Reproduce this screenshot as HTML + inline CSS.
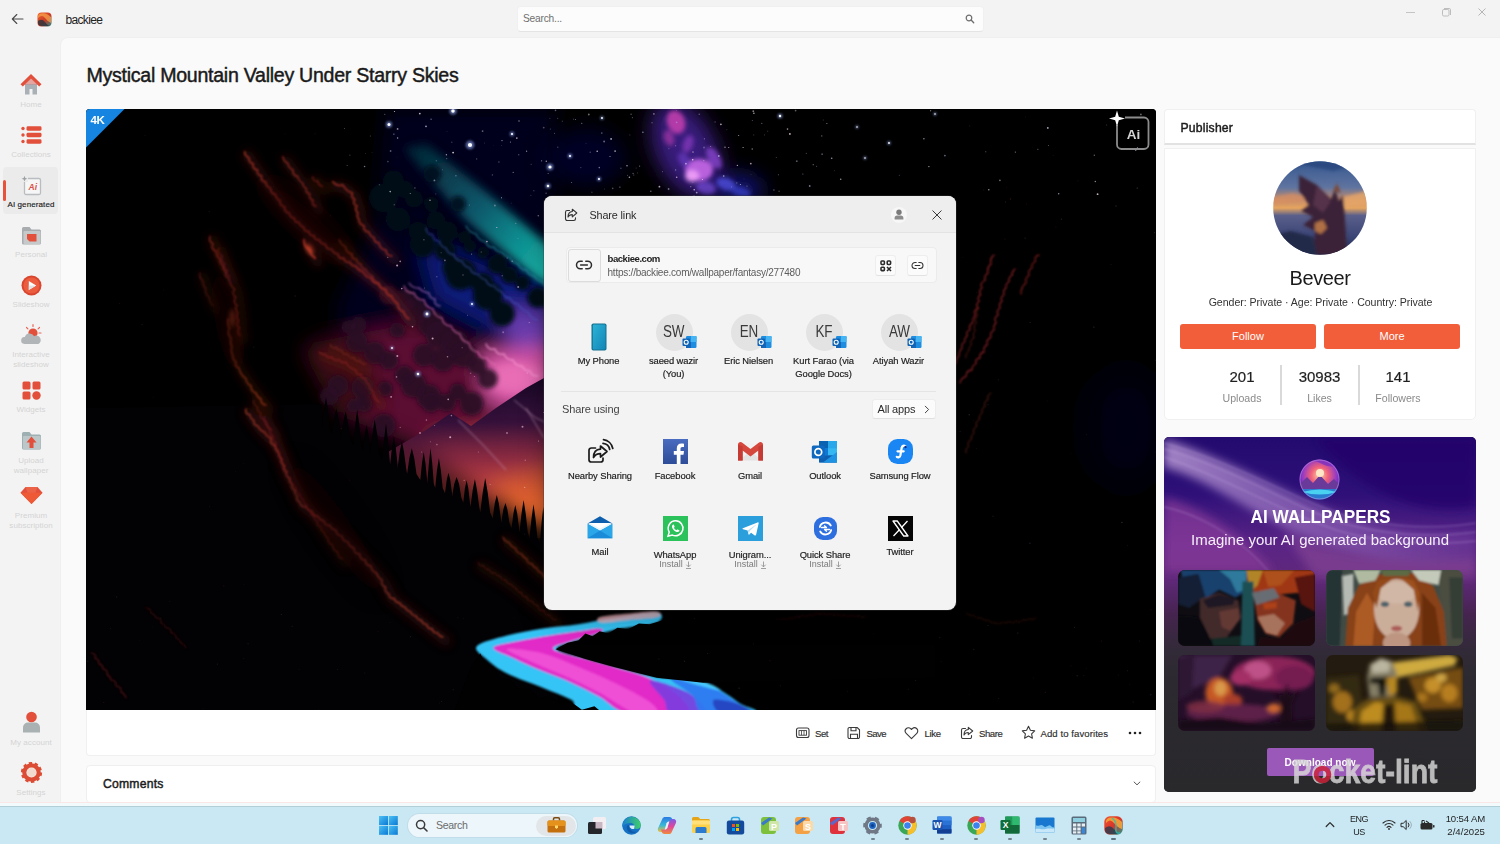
<!DOCTYPE html>
<html lang="en">
<head>
<meta charset="utf-8">
<title>backiee - Mystical Mountain Valley Under Starry Skies</title>
<style>
*{box-sizing:border-box;margin:0;padding:0}
html,body{width:1500px;height:844px;overflow:hidden;background:#f3f3f3}
body{font-family:"Liberation Sans","DejaVu Sans",sans-serif;color:#1b1b1b;position:relative;-webkit-font-smoothing:antialiased}
.abs{position:absolute}
.t{position:absolute;white-space:nowrap;line-height:1}
.c{text-align:center;transform:translateX(-50%)}
#titlebar{left:0;top:0;width:1500px;height:38px;background:#f3f3f3}
#sidebar{left:0;top:38px;width:61px;height:768px;background:#f3f3f3}
#content{left:61px;top:38px;width:1439px;height:768px;background:#fafafa;border-top-left-radius:7px;box-shadow:0 0 0 1px #efefef}
#search{left:517px;top:6px;width:467px;height:26px;background:#fcfcfc;border-radius:4px;border:1px solid #f0f0f0;border-bottom-color:#e4e4e4}
.sblabel{font-size:8px;color:#d4d4d4;left:31px;letter-spacing:.05px;margin-top:1px}
#pagetitle{left:86.5px;top:65.5px;font-size:19.6px;color:#1a1a1a;-webkit-text-stroke:.45px #1a1a1a;letter-spacing:-.28px}
#hero{left:86px;top:109px;width:1070px;height:601px;background:#000;overflow:hidden;border-radius:4px 4px 0 0}
#actions{left:86px;top:710px;width:1070px;height:46px;background:#fff;border:1px solid #f0f0f0;border-top:none;border-radius:0 0 4px 4px}
#comments{left:86px;top:765px;width:1070px;height:38px;background:#fff;border:1px solid #efefef;border-radius:4px}
.act{font-size:9.6px;color:#2e2e2e;top:728.5px;-webkit-text-stroke:.15px #2e2e2e}
#pubhead{left:1164px;top:109px;width:312px;height:36px;background:#fff;border:1px solid #f0f0f0;border-bottom:2px solid #e2e2e2;border-radius:4px 4px 0 0}
#pubbody{left:1164px;top:148px;width:312px;height:272px;background:#fff;border:1px solid #f0f0f0;border-radius:0 0 5px 5px}
.btn{height:25px;background:#f25d3a;border-radius:3px;color:#fff;font-size:11px;text-align:center;line-height:25px;top:324px;width:136px}
.statn{font-size:15px;color:#1f1f1f;top:368.5px;-webkit-text-stroke:.2px #1f1f1f}
.statl{font-size:10.6px;color:#8a8a8a;top:392.5px}
.vdiv{width:2px;background:#d9d9d9;top:365px;height:40px}
#ad{left:1164px;top:437px;width:312px;height:355px;border-radius:5px;overflow:hidden;background:#2b2a2d}
#taskbar{left:0;top:806px;width:1500px;height:38px;background:#c9e8f3;border-top:1px solid #b2ced6}
#dialog{left:544px;top:196px;width:412px;height:414px;background:#f3f3f3;border-radius:8px;box-shadow:0 0 0 1px rgba(60,60,60,.35),0 8px 24px rgba(0,0,0,.35);overflow:hidden}
#dlghead{left:0;top:0;width:412px;height:37px;background:#eeeeee;border-bottom:1px solid #e3e3e3}
.dl{font-size:9.4px;color:#1d1d1d;top:0;letter-spacing:-.08px;-webkit-text-stroke:.18px #1d1d1d}
.ins{font-size:9px;color:#7a7a7a}
.av{width:37px;height:37px;border-radius:50%;background:#e3e3e3;font-size:16px;line-height:36px;text-align:center;color:#3a3a3a;top:309px;letter-spacing:-.3px}
.av span{display:inline-block;transform:scaleX(.84)}
</style>
</head>
<body>
<div id="titlebar" class="abs"></div>
<div id="sidebar" class="abs"></div>
<div id="content" class="abs"></div>

<!-- title bar -->
<svg class="abs" style="left:11px;top:13px" width="13" height="12" viewBox="0 0 13 12"><path d="M12 6H1.5M5.8 1.5 1.3 6l4.5 4.5" fill="none" stroke="#4a4a4a" stroke-width="1.1" stroke-linecap="round" stroke-linejoin="round"/></svg>
<svg class="abs" style="left:37px;top:12px" width="15" height="15" viewBox="0 0 15 15">
  <defs><linearGradient id="lg1" x1="0" y1="0" x2="1" y2="1"><stop offset="0" stop-color="#f0632f"/><stop offset=".55" stop-color="#c83a24"/><stop offset="1" stop-color="#1f8a8a"/></linearGradient></defs>
  <rect x=".5" y=".5" width="14" height="14" rx="4" fill="url(#lg1)"/>
  <path d="M1 6 Q5 2 8 6 T14 11 V5 Q10 1 6 1.2 Q2 1 1 4Z" fill="#f7a24a" opacity=".75"/>
  <path d="M1 9 Q5 6 8 10 T13 14 H5 Q1 14 1 11Z" fill="#27333f" opacity=".8"/>
</svg>
<div class="t" style="left:65.5px;top:14px;font-size:12px;color:#222;letter-spacing:-.67px">backiee</div>
<div id="search" class="abs"></div>
<div class="t" style="left:523px;top:13.5px;font-size:10.2px;color:#6f6f6f;letter-spacing:-.2px">Search...</div>
<svg class="abs" style="left:964.5px;top:13.5px" width="10" height="10" viewBox="0 0 10 10"><circle cx="4" cy="4" r="2.800" fill="none" stroke="#6e6e6e" stroke-width="1.200"/><path d="M6.100 6.100 8.700 8.700" stroke="#6e6e6e" stroke-width="1.400" stroke-linecap="round"/></svg>
<svg class="abs" style="left:1400px;top:6px" width="94" height="14" viewBox="0 0 94 14">
  <path d="M6 6.5h9" stroke="#c4c4c4" stroke-width="1"/>
  <rect x="42.5" y="3.5" width="6.5" height="6.5" rx="1.3" fill="none" stroke="#bdbdbd" stroke-width="1"/>
  <path d="M44 2.5h5.2a1.3 1.3 0 0 1 1.3 1.3V9" fill="none" stroke="#bdbdbd" stroke-width="1"/>
  <path d="M78.500 2.500l7 7M85.500 2.500l-7 7" stroke="#b5b5b5" stroke-width="1"/>
</svg>

<!-- sidebar -->
<div class="abs" style="left:3px;top:167px;width:55px;height:47px;background:#ebebeb;border-radius:4px"></div>
<div class="abs" style="left:3px;top:180px;width:3px;height:21px;background:#e8523a;border-radius:2px"></div>

<!-- home -->
<svg class="abs" style="left:20px;top:73px" width="22" height="24" viewBox="0 0 22 24">
  <path d="M5 11v10.500h4.500V16h3v5.500H17V11z" fill="#a9b1b6"/>
  <path d="M11 1 .5 11.200l2.300 2.300L11 5.800l8.200 7.700 2.300-2.300z" fill="#e2503c"/>
  <path d="M11 5.200 4.500 11.400h13z" fill="#d9736a" opacity=".6"/>
</svg>
<div class="t c sblabel" style="top:100px">Home</div>
<!-- collections -->
<svg class="abs" style="left:21px;top:125px" width="21" height="20" viewBox="0 0 21 20">
  <g fill="#e2503c"><circle cx="2" cy="3.500" r="1.700"/><circle cx="2" cy="10" r="1.700"/><circle cx="2" cy="16.500" r="1.700"/>
  <rect x="5.500" y="1.300" width="15" height="4.400" rx="1.400"/><rect x="5.500" y="7.800" width="15" height="4.400" rx="1.400"/><rect x="5.500" y="14.300" width="15" height="4.400" rx="1.400"/></g>
</svg>
<div class="t c sblabel" style="top:150px">Collections</div>
<!-- ai generated -->
<svg class="abs" style="left:21px;top:175px" width="22" height="22" viewBox="0 0 22 22">
  <rect x="3.500" y="3.500" width="16" height="16" rx="1.500" fill="#f6f6f6" stroke="#b9bdbf" stroke-width="1.300"/>
  <rect x="1" y="1" width="6" height="6" fill="#ebebeb"/>
  <path d="M3.500 0.800 4.300 2.900 6.400 3.700 4.300 4.500 3.500 6.600 2.700 4.500 0.600 3.700 2.700 2.900z" fill="#9aa0a3"/>
  <text x="11.800" y="15" font-family="Liberation Sans, sans-serif" font-size="8.500" font-style="italic" font-weight="bold" fill="#d9534a" text-anchor="middle">Ai</text>
</svg>
<div class="t c" style="left:31px;top:200.5px;font-size:8px;color:#1c1c1c;letter-spacing:.1px;-webkit-text-stroke:.15px #1c1c1c">AI generated</div>
<!-- personal -->
<svg class="abs" style="left:21px;top:225px" width="21" height="21" viewBox="0 0 21 21">
  <path d="M1 3.500a1.500 1.500 0 0 1 1.500-1.500h6l2 2.500h8a1.500 1.500 0 0 1 1.500 1.500V18a1.500 1.500 0 0 1-1.500 1.500h-16A1.500 1.500 0 0 1 1 18z" fill="#a8acae"/>
  <rect x="2.500" y="6" width="17" height="13" rx="1" fill="#c6c9ca"/>
  <path d="M6 9h9.500v7.500H8.500L6 14z" fill="#e2503c"/>
</svg>
<div class="t c sblabel" style="top:250px">Personal</div>
<!-- slideshow -->
<svg class="abs" style="left:21px;top:275px" width="21" height="21" viewBox="0 0 21 21">
  <circle cx="10.500" cy="10.500" r="10" fill="#d8462f"/><circle cx="10.500" cy="10.500" r="8" fill="#ec5c3e"/>
  <path d="M7.800 6 15.200 10.500 7.800 15z" fill="#fff"/><path d="M7.800 10.500h7.400L7.800 15z" fill="#dfe3e6"/>
</svg>
<div class="t c sblabel" style="top:300px">Slideshow</div>
<!-- interactive slideshow -->
<svg class="abs" style="left:20px;top:323px" width="23" height="23" viewBox="0 0 23 23">
  <g stroke="#e8665a" stroke-width="1.200" stroke-linecap="round"><path d="M13 1.500v2M6.500 4.500l1.400 1.400M19.500 4.500l-1.400 1.400M21 10h-2"/></g>
  <circle cx="13" cy="10" r="4.600" fill="#e2503c"/>
  <path d="M4.500 21a3.500 3.500 0 0 1 .3-7 5 5 0 0 1 9.300-.8 4 4 0 0 1 4.400 7.800z" fill="#b1b5b7"/>
</svg>
<div class="t c sblabel" style="top:350px">Interactive</div>
<div class="t c sblabel" style="top:360px">slideshow</div>
<!-- widgets -->
<svg class="abs" style="left:22px;top:381px" width="19" height="19" viewBox="0 0 19 19">
  <g fill="#e2503c"><rect x=".5" y=".5" width="8" height="8" rx="1.500"/><rect x="10.500" y=".5" width="8" height="8" rx="1.500"/><rect x=".5" y="10.500" width="8" height="8" rx="1.500"/><circle cx="14.500" cy="14.500" r="4.200"/></g>
</svg>
<div class="t c sblabel" style="top:405px">Widgets</div>
<!-- upload -->
<svg class="abs" style="left:21px;top:430px" width="21" height="21" viewBox="0 0 21 21">
  <path d="M1 3.500a1.500 1.500 0 0 1 1.500-1.500h6l2 2.500h8a1.500 1.500 0 0 1 1.500 1.500V18a1.500 1.500 0 0 1-1.500 1.500h-16A1.500 1.500 0 0 1 1 18z" fill="#9fb0b3"/>
  <rect x="2" y="6" width="17.500" height="13.500" rx="1" fill="#bcc7c9"/>
  <path d="M10.500 6.500 15.500 12.500H12.500V18h-4v-5.500h-3z" fill="#e2503c"/>
</svg>
<div class="t c sblabel" style="top:456px">Upload</div>
<div class="t c sblabel" style="top:466px">wallpaper</div>
<!-- premium -->
<svg class="abs" style="left:20px;top:486px" width="23" height="19" viewBox="0 0 23 19">
  <path d="M5.500 1h12l5 5.800L11.500 18 .5 6.800z" fill="#e2503c"/>
  <path d="M.5 6.800h22L11.500 18z" fill="#ee5a36"/><path d="M5.500 1h12l-2 5.800h-8z" fill="#f06a4c" opacity=".7"/>
</svg>
<div class="t c sblabel" style="top:511px">Premium</div>
<div class="t c sblabel" style="top:521px">subscription</div>
<!-- account -->
<svg class="abs" style="left:21px;top:710px" width="21" height="24" viewBox="0 0 21 24">
  <path d="M2 22.500v-5a5 5 0 0 1 5-5h7a5 5 0 0 1 5 5v5z" fill="#a9b1b3"/>
  <circle cx="10.500" cy="7" r="5.300" fill="#e2503c"/>
</svg>
<div class="t c sblabel" style="top:738px">My account</div>
<!-- settings -->
<svg class="abs" style="left:20px;top:761px" width="23" height="23" viewBox="0 0 23 23">
  <circle cx="11.500" cy="11.500" r="7.200" fill="none" stroke="#dc4c34" stroke-width="4.200"/>
  <circle cx="11.500" cy="11.500" r="9.300" fill="none" stroke="#dc4c34" stroke-width="2.600" stroke-dasharray="3.300 2.540"/>
  <circle cx="11.500" cy="11.500" r="4.600" fill="#f4c9b8" opacity=".6"/>
</svg>
<div class="t c sblabel" style="top:788px">Settings</div>

<div id="pagetitle" class="t">Mystical Mountain Valley Under Starry Skies</div>
<!-- hero image -->
<div id="hero" class="abs">
<svg width="1070" height="602" viewBox="0 0 1070 602" style="display:block;margin-top:-1px">
<defs>
<filter id="b30" x="-150%" y="-150%" width="400%" height="400%"><feGaussianBlur stdDeviation="20"/></filter>
<filter id="b14" x="-100%" y="-100%" width="300%" height="300%"><feGaussianBlur stdDeviation="10"/></filter>
<filter id="b6" x="-50%" y="-50%" width="200%" height="200%"><feGaussianBlur stdDeviation="5"/></filter>
<filter id="b3" x="-50%" y="-50%" width="200%" height="200%"><feGaussianBlur stdDeviation="2"/></filter>
<filter id="b1" x="-50%" y="-50%" width="200%" height="200%"><feGaussianBlur stdDeviation="0.8"/></filter>
<linearGradient id="riv" x1="0" y1="0" x2="1" y2="0"><stop offset="0" stop-color="#39d0ff"/><stop offset=".5" stop-color="#3a9cff"/><stop offset="1" stop-color="#2a3fd0"/></linearGradient>
<linearGradient id="mtn" gradientUnits="userSpaceOnUse" x1="0" y1="270" x2="0" y2="420"><stop offset="0" stop-color="#160624"/><stop offset=".3" stop-color="#32103a" stop-opacity=".95"/><stop offset=".55" stop-color="#7a2440" stop-opacity=".7"/><stop offset=".8" stop-color="#c8483a" stop-opacity=".35"/><stop offset="1" stop-color="#e8682c" stop-opacity=".1"/></linearGradient>
<linearGradient id="teal" gradientUnits="userSpaceOnUse" x1="330" y1="45" x2="465" y2="160"><stop offset="0" stop-color="#052838"/><stop offset=".45" stop-color="#0a5468"/><stop offset=".8" stop-color="#109494"/><stop offset="1" stop-color="#18bcb0"/></linearGradient>
</defs>
<rect width="1070" height="602" fill="#000"/>
<g filter="url(#b14)">
<path d="M300 0 H470 V420 L260 300 L250 200 L290 110Z" fill="#04061a"/>
<path d="M335 135 L380 150 L440 175 L470 185 L470 232 L410 222 L350 190Z" fill="#111c7c"/>
<path d="M415 200 L470 208 L470 250 L425 240Z" fill="#6a3cb0"/>
<path d="M385 245 L470 238 L470 300 L420 300 L385 285Z" fill="#d654a4"/>
<path d="M225 235 L330 215 L395 245 L400 300 L470 300 L470 360 L350 345 L260 310Z" fill="#5c0c30"/>
<path d="M215 240 L280 230 L300 300 L250 305Z" fill="#3c0818"/>
<path d="M340 330 L474 310 L474 390 L400 390Z" fill="#c03c44"/>
<path d="M400 375 L474 345 L474 425 L430 405Z" fill="#f06e2c"/>
</g>
<g filter="url(#b6)">
<path d="M318 40 L340 36 L400 84 L466 140 L474 148 L474 182 L452 172 L380 112Z" fill="url(#teal)"/>
<ellipse cx="428" cy="270" rx="30" ry="16" fill="#f078bc" opacity=".7"/>
</g>
<g filter="url(#b3)">
<circle cx="307.5" cy="72.6" r="10.6" fill="#050819"/>
<circle cx="319.2" cy="81.5" r="8.9" fill="#050819"/>
<circle cx="327.9" cy="90.9" r="9.1" fill="#050819"/>
<circle cx="345.5" cy="96.1" r="7.5" fill="#050819"/>
<circle cx="350.1" cy="112.6" r="9.5" fill="#050819"/>
<circle cx="361.1" cy="123.7" r="10.8" fill="#050819"/>
<circle cx="378.8" cy="129.5" r="6.8" fill="#050819"/>
<circle cx="383.9" cy="138" r="6.3" fill="#050819"/>
<circle cx="397.2" cy="144.5" r="6.2" fill="#050819"/>
<circle cx="411.5" cy="155.9" r="10.2" fill="#050819"/>
<circle cx="423.6" cy="167.2" r="8.5" fill="#050819"/>
<circle cx="436.5" cy="174.8" r="7.4" fill="#050819"/>
<circle cx="451.4" cy="189.6" r="10.2" fill="#050819"/>
<circle cx="460.1" cy="192.2" r="7.1" fill="#050819"/>
<circle cx="297.5" cy="89.8" r="14.6" fill="#050819"/>
<circle cx="312.1" cy="111.4" r="12.3" fill="#050819"/>
<circle cx="332.2" cy="123.6" r="10" fill="#050819"/>
<circle cx="336.5" cy="136.6" r="12.8" fill="#050819"/>
<circle cx="359.1" cy="142.7" r="10.4" fill="#050819"/>
<circle cx="368.2" cy="159.5" r="11.6" fill="#050819"/>
<circle cx="375" cy="166.3" r="15.8" fill="#050819"/>
<circle cx="396.4" cy="176" r="11.5" fill="#050819"/>
<circle cx="401.9" cy="187.5" r="14.8" fill="#050819"/>
<circle cx="416.1" cy="205.7" r="12.7" fill="#050819"/>
<circle cx="346" cy="66" r="9" fill="#04091c" opacity=".9"/>
<circle cx="372" cy="96" r="8" fill="#04091c" opacity=".9"/>
<circle cx="302.5" cy="186.9" r="9.7" fill="#2a0a26" opacity=".9"/>
<circle cx="318.6" cy="192.6" r="11.1" fill="#2a0a26" opacity=".9"/>
<circle cx="327.7" cy="204.4" r="13.9" fill="#2a0a26" opacity=".9"/>
<circle cx="344.9" cy="215.3" r="13.4" fill="#2a0a26" opacity=".9"/>
<circle cx="352.7" cy="226.7" r="13.3" fill="#2a0a26" opacity=".9"/>
<circle cx="368.6" cy="234.9" r="13.9" fill="#2a0a26" opacity=".9"/>
<circle cx="377.7" cy="246.8" r="12.9" fill="#2a0a26" opacity=".9"/>
<circle cx="391.1" cy="257.7" r="9.4" fill="#2a0a26" opacity=".9"/>
<circle cx="401.7" cy="270.7" r="10.2" fill="#2a0a26" opacity=".9"/>
<circle cx="270.8" cy="234" r="10.8" fill="#2a0a26" opacity=".9"/>
<circle cx="288.7" cy="244.9" r="11.3" fill="#2a0a26" opacity=".9"/>
<circle cx="302.9" cy="252.5" r="9.6" fill="#2a0a26" opacity=".9"/>
<circle cx="318.3" cy="267.5" r="10" fill="#2a0a26" opacity=".9"/>
<circle cx="327.5" cy="276.9" r="12.8" fill="#2a0a26" opacity=".9"/>
<circle cx="342.6" cy="288.6" r="12.5" fill="#2a0a26" opacity=".9"/>
<circle cx="360.8" cy="294.4" r="9.4" fill="#2a0a26" opacity=".9"/>
<circle cx="278.1" cy="296" r="8.3" fill="#2a0a26" opacity=".9"/>
<circle cx="371.8" cy="283.6" r="8.5" fill="#2a0a26" opacity=".9"/>
<circle cx="268.1" cy="297.8" r="7.3" fill="#2a0a26" opacity=".9"/>
<circle cx="276.5" cy="279.3" r="11.3" fill="#2a0a26" opacity=".9"/>
<circle cx="338.3" cy="247.2" r="11.6" fill="#2a0a26" opacity=".9"/>
<circle cx="272.6" cy="216.9" r="8.3" fill="#2a0a26" opacity=".9"/>
<circle cx="311.3" cy="222" r="7.9" fill="#2a0a26" opacity=".9"/>
<circle cx="299" cy="280.8" r="7.7" fill="#2a0a26" opacity=".9"/>
<circle cx="297.9" cy="317.5" r="11.9" fill="#2a0a26" opacity=".9"/>
<circle cx="345.1" cy="294.5" r="9.9" fill="#2a0a26" opacity=".9"/>
<circle cx="262.5" cy="219" r="7.1" fill="#2a0a26" opacity=".9"/>
<circle cx="385.6" cy="295.6" r="11.8" fill="#2a0a26" opacity=".9"/>
<circle cx="243.4" cy="288.2" r="9.4" fill="#2a0a26" opacity=".9"/>
<circle cx="356.9" cy="251.7" r="12" fill="#2a0a26" opacity=".9"/>
<circle cx="252" cy="277.8" r="10.7" fill="#2a0a26" opacity=".9"/>
</g>
<g filter="url(#b1)" fill="none" stroke-linecap="round">
<path d="M318 178Q320.2 185.5 328 185Q330.5 192.1 338 192Q339.5 199.5 347 201Q348.3 208.7 356 210Q357.2 217.7 365 218Q367.4 224.3 374 226Q375.5 233.5 383 235Q384 243 392 244Q393.8 251 401 250Q403.7 255.8 410 256" stroke="#e070b0" stroke-width="1.400" opacity=".7"/>
<path d="M400 236Q402.3 242.5 409 241Q411.2 247.7 418 246Q420.4 252.2 427 252Q429.3 258.3 436 258Q438.3 263.2 444 263Q446 268.8 452 268" stroke="#ffa0d8" stroke-width="1.400" opacity=".7"/>
<path d="M323 175Q326.5 180.6 333 180Q337.1 184.3 343 185Q343.5 190.5 349 191Q347.8 197.1 354 198" stroke="#b870c8" stroke-width="1.300" opacity=".7"/>
<path d="M340 120Q340.4 126.3 346.7 126.7Q347.3 132.7 353.3 133.3Q354.7 138.7 360 140Q361.6 146.3 368 146.7Q369.8 152.6 376 153.3Q378.1 159 384 160Q385.5 166.3 392 166Q394.8 170.6 400 172Q401.7 178.1 408 178Q410.9 182.5 416 184Q417.9 189.7 424 190Q426.1 195.5 432 196Q435.5 201.9 442 204Q444.7 210.9 452 212" stroke="#4a60c8" stroke-width="1.200" opacity=".6"/>
<path d="M380 118Q383 124.5 390 126Q392.8 132.7 400 134Q401.6 140.3 408 139.3Q410.6 144.1 416 144.7Q419 148.8 424 150Q426.4 155.1 432 156Q433.8 161.9 440 162Q442.6 166.9 448 168Q451.3 172.9 457 174Q459.1 180.6 466 180" stroke="#38c0c8" stroke-width="1.200" opacity=".55"/>
</g>
<g filter="url(#b14)">
<ellipse cx="600" cy="42" rx="30" ry="52" transform="rotate(-25 600 42)" fill="#3c1c84" opacity=".95"/>
<ellipse cx="652" cy="82" rx="26" ry="16" fill="#1c1c90" opacity=".8"/>
<ellipse cx="500" cy="50" rx="40" ry="30" fill="#07072a" opacity=".9"/>
</g>
<g filter="url(#b3)">
<ellipse cx="590" cy="14" rx="9" ry="12" transform="rotate(-20 590 14)" fill="#c840b0" opacity="0.85"/>
<ellipse cx="583" cy="30" rx="5" ry="8" transform="rotate(-20 583 30)" fill="#a838a8" opacity="0.7"/>
<ellipse cx="602" cy="36" rx="5" ry="9" transform="rotate(20 602 36)" fill="#8a3cc0" opacity="0.7"/>
<ellipse cx="613" cy="62" rx="14" ry="11" transform="rotate(0 613 62)" fill="#c868e8" opacity="0.9"/>
<ellipse cx="606" cy="68" rx="7" ry="6" transform="rotate(0 606 68)" fill="#f0a0f8" opacity="0.9"/>
<ellipse cx="628" cy="50" rx="6" ry="12" transform="rotate(-30 628 50)" fill="#8a44d0" opacity="0.8"/>
<ellipse cx="598" cy="52" rx="5" ry="8" transform="rotate(-30 598 52)" fill="#6a3cc0" opacity="0.7"/>
<ellipse cx="640" cy="76" rx="10" ry="6" transform="rotate(20 640 76)" fill="#5050e0" opacity="0.8"/>
<ellipse cx="655" cy="84" rx="10" ry="5" transform="rotate(15 655 84)" fill="#3840c8" opacity="0.8"/>
<ellipse cx="620" cy="80" rx="10" ry="6" transform="rotate(10 620 80)" fill="#7a50e0" opacity="0.7"/>
</g>
<path d="M300 345 L340 322 L365 305 L385 318 L410 300 L440 280 L458 270 L470 262 L470 430 L300 430Z" fill="url(#mtn)"/>
<g filter="url(#b1)" stroke="#c8a0c0" stroke-opacity=".35" stroke-width="1.600" fill="none"><path d="M372 312 L398 338 L420 362"/><path d="M428 292 L450 310 L468 318"/><path d="M440 300 L458 330"/></g>
<path d="M0 602 L0 300 L236 296 L236 320.7 L238 302 L240 288.9 L242 302 L244 320.7 L245.9 326.1 L248.1 310.1 L250.3 300.3 L252.5 310.1 L254.7 326.1 L254.9 331.1 L257.3 314.2 L259.6 303.3 L261.9 314.2 L264.3 331.1 L267.3 337.2 L269.2 316.6 L271.2 301.3 L273.2 316.6 L275.1 337.2 L277 342 L278.8 326.1 L280.5 316.4 L282.3 326.1 L284 342 L284 346.4 L286.4 326.2 L288.7 311.3 L291.1 326.2 L293.5 346.4 L296.2 352.3 L298.1 331.2 L300 315.2 L301.8 331.2 L303.7 352.3 L304.1 356.4 L306 339.4 L307.9 328.3 L309.7 339.4 L311.6 356.4 L311.5 360.6 L313.7 343.9 L315.9 333.2 L318 343.9 L320.2 360.6 L321.1 365.9 L323.4 349.9 L325.8 340.2 L328.2 349.9 L330.5 365.9 L334.3 372.1 L336 355.1 L337.7 344 L339.4 355.1 L341.1 372.1 L341.2 375.7 L342.9 355.3 L344.5 340 L346.2 355.3 L347.8 375.7 L349.2 380.1 L351 362.1 L352.9 349.9 L354.8 362.1 L356.7 380.1 L359 385.2 L360.8 371.6 L362.5 364.8 L364.2 371.6 L366 385.2 L365.9 389.4 L368.3 375.8 L370.6 369 L373 375.8 L375.3 389.4 L377.3 394.7 L378.9 380.2 L380.6 372.2 L382.3 380.2 L383.9 394.7 L384.5 399 L386.7 382 L388.9 371 L391 382 L393.2 399 L394.3 404.5 L396.7 384.5 L399.2 369.9 L401.7 384.5 L404.1 404.5 L406.7 410.6 L408.7 395.5 L410.8 387 L412.8 395.5 L414.8 410.6 L415.3 415.1 L417.3 401.6 L419.4 394.9 L421.4 401.6 L423.4 415.1 L425.6 420.3 L427.4 405.5 L429.3 397.1 L431.2 405.5 L433 420.3 L433.5 424.7 L435.5 405.6 L437.6 392.1 L439.7 405.6 L441.8 424.7 L443.5 429.9 L445.5 410.4 L447.5 396.3 L449.5 410.4 L451.4 429.9 L453.9 435.1 L455.6 414.3 L457.3 398.7 L459 414.3 L460.7 435.1 L463 439.9 L464.7 420.6 L466.5 406.9 L468.2 420.6 L470 439.9 L472 442.8 L472 602Z" fill="#020103"/>
<g filter="url(#b1)" fill="none" stroke-linecap="round" stroke-linejoin="round">
<path d="M158.7 43.6Q158.6 48.2 163 49.7Q162.4 54.6 167.2 55.8Q166 61.1 171.5 61.8Q170.4 67.1 175.7 67.9Q174.4 73.4 180 74Q180 78.9 184.7 80.2Q184.3 85.4 189.4 86.4Q190 90.9 194.1 92.6Q193.5 97.9 198.8 98.8Q198 104.3 203.5 105Q203.5 109.8 208.3 109.7Q208.2 114.6 213.2 114.3Q214 118.3 218 119Q217.9 124.3 223.1 123.2Q222.9 128.6 228.2 127.3Q228 132.8 233.3 131.5Q234.5 136.4 239.5 136.3Q240.3 141.8 245.8 141.2Q247.3 145.6 252 146Q252.6 151.5 257.9 150Q258.6 155.3 263.9 154Q265.4 158.2 269.8 158Q272.4 162.5 277.4 164Q279.4 169.3 285 170Q286.7 175.4 292.3 175.7Q293.6 181.5 299.6 181.3Q300.4 186.9 305.8 188.7Q307.5 193.5 312 196Q311.6 202 317.4 203.5Q318.7 208.4 322.9 211" stroke="#c23a2a" stroke-width="1.6" opacity="0.85"/>
<path d="M196.8 48.6Q197.6 53.3 201.9 55.3Q202.4 60.2 207 62Q206.3 67.6 211.8 68.5Q212.6 73.1 216.7 75.1Q216.8 79 220.3 80.5Q219.6 85 224 86Q222.2 90.7 227 92.2Q224.9 97 230 98.3" stroke="#c23a2a" stroke-width="1.4" opacity="0.8"/>
<path d="M226.7 68.5Q226.6 74 232 73Q232 77.7 236.6 78.4" stroke="#a82830" stroke-width="1.3" opacity="0.7"/>
<path d="M246.6 73.5Q250.6 78.8 257 77Q259.9 83.2 266.5 85Q264.6 89.3 268.8 91.5Q266.1 96 271 98Q268.3 101.9 272 104.8Q270.4 108.5 273 111.6Q273.1 116.6 278 117.8Q277.3 123.5 283 124Q283.7 128.3 288 129.4Q287.9 134.5 293 134.8Q293.4 141.4 300 142Q300.1 147.9 306 148" stroke="#c23a2a" stroke-width="1.5" opacity="0.85"/>
<path d="M253 131.5Q254.6 136.6 259.5 138.8Q259.8 145.1 266 146Q265 151.4 270.6 151.1Q270.5 155.8 275.1 156.3Q275 161 279.7 161.4Q281.4 166.4 286.4 168.2Q287.4 173.8 293 175Q294.1 180.4 299.5 181.5Q300.4 187.1 306 188" stroke="#c0402c" stroke-width="1.3" opacity="0.7"/>
<path d="M218 132Q217.9 138.3 223.4 141.5Q224.7 146.8 229 150" stroke="#c23a2a" stroke-width="2.4" opacity="0.95"/>
<path d="M123.9 128.2Q122.5 133.1 127 135.6Q124.4 141 130 143Q129.9 147.6 133.5 150.5Q133.5 155.1 137 158Q136.6 162 140 164Q137.7 168.9 143 170Q143.2 177 148.7 181.3Q145.1 185.8 149.8 189.2Q146.5 193.7 150.9 197.1Q148.7 201.4 152 205Q149.9 209 152.6 212.6Q149.8 216.6 153.1 220.1Q150.8 224.1 153.7 227.7" stroke="#a82830" stroke-width="1.5" opacity="0.75"/>
<path d="M114 164.7Q112.6 169.9 117 172.8Q116.6 177.6 120 181Q119.1 186.3 123.5 189.4Q123.6 194.3 127 197.8" stroke="#a82830" stroke-width="1.2" opacity="0.55"/>
<path d="M142 211Q140.7 216.1 143.5 220.5Q140.5 225.8 145 230Q143.7 234.6 146 238.8Q144.3 243.5 147 247.6Q146.4 251.7 150 253.8Q148.3 258.5 153 260Q154.3 266.8 160 270.8Q160.3 275.9 165 277.9Q164.7 283.4 170 285Q171 289.3 175 291Q174.7 296.4 180 297" stroke="#d04a30" stroke-width="1.4" opacity="0.7"/>
<path d="M133 140Q130.7 145.4 136 148Q134.3 153.2 139 156Q136.9 160.4 141.5 162Q139.4 166.4 144 168" stroke="#c23a2a" stroke-width="1.1" opacity="0.5"/>
<path d="M233 244Q235.6 246.9 239.5 246.5Q241.5 250.9 246 249Q248.1 254 252.9 251.5Q255.2 255.9 259.8 254Q262.9 260.5 270 262Q269.7 267.2 274.9 266.4Q275.2 270.9 279.7 270.8Q279.6 275 283.4 276.9Q283.2 281.1 287 283Q287.2 290 293 294" stroke="#a82830" stroke-width="1.4" opacity="0.6"/>
<path d="M244 236Q245 241.2 250 239.3Q251.9 243 256 242.7Q257.2 247.6 262 246Q263.1 251.1 268 249.3Q269 254.6 274 252.7Q275.8 256.6 280 256" stroke="#c0402c" stroke-width="1.1" opacity="0.45"/>
<path d="M160 301Q158.6 306.2 164 306.7Q164.2 310.8 168 312.3Q166.9 317.4 172 318Q173.7 322.6 178.5 324Q180.4 328.4 185 330Q183.4 335.7 189 337.5Q189.2 342.2 193 345Q192.6 348.9 195.8 351.2Q194.6 355.5 198.5 357.5Q197.2 361.8 201.2 363.8Q198.7 368.6 204 370Q202.3 374.2 206.5 376Q204.4 380.4 209 382Q208.2 385.9 211.5 388Q209.6 392.3 214 394Q214.6 399.4 220 398.7Q221.8 402.5 226 403.3Q227 408.2 232 408Q233.4 412.4 238 412.7Q238.6 418.1 244 417.3Q245.4 421.8 250 422Q250.4 427.6 256 428Q256.6 433.4 262 434Q263.1 438.9 268 440Q267.6 446 273.7 446Q273.6 451.7 279.3 452Q279.3 457.7 285 458Q285.4 463.4 290.5 465Q291.9 469.6 296 472Q294.4 477.2 299.5 479Q298.2 484 303 486Q303.1 491.4 308.4 490.4Q309.2 494.9 313.8 494.8Q315.1 498.7 319.2 499.2Q320.6 503 324.6 503.6Q325.9 507.5 330 508Q331.4 511.8 335.4 512.2Q336.6 516.2 340.8 516.4Q341.3 521.3 346.2 520.6Q346.9 525.3 351.6 524.8Q353 528.5 357 529" stroke="#d04a30" stroke-width="1.4" opacity="0.8"/>
<path d="M178 308Q177.8 312.2 181 314.8Q180.7 318.9 184 321.5Q183 326 187 328.2Q185.9 332.8 190 335Q188.7 339.6 192.5 342.5Q191.6 347 195 350Q193.7 354.6 197.5 357.5Q195.5 362.3 200 365Q200.8 369.5 204.7 372Q205.1 376.7 209.3 379Q209.3 384.1 214 386Q213.5 390.2 217.5 391.5Q217 395.7 221 397Q219.2 402 224.5 402.5Q223.4 407 228 408Q228.1 411.8 231.5 413.5Q230 418.3 235 419Q234.6 423.1 238.5 424.5Q238.6 428.3 242 430Q241.3 435.8 247 437Q246.2 442.9 252 444Q251.1 449.9 257 451" stroke="#a82830" stroke-width="1.1" opacity="0.55"/>
<path d="M168 292Q166.8 296.8 171.3 298.7Q171 303 174.7 305.3Q173.4 310.1 178 312Q179.9 318.6 186 322" stroke="#a82830" stroke-width="1.1" opacity="0.55"/>
<path d="M417 429Q418.5 433.7 423.3 434.7Q425.2 439 429.7 440.3Q430.4 445.9 436 446Q437 449.9 441 450.8Q440.6 456.2 446 455.5Q447.1 459.4 451 460.2Q451.7 464.5 456 465Q457.5 470.2 463 470.5Q464.8 475.4 470 476" stroke="#d04a30" stroke-width="1.2" opacity="0.65"/>
<path d="M392 454Q392.8 459 397.6 457.6Q398.9 461.8 403.2 461.2Q404 466.1 408.8 464.8Q410.6 468.2 414.4 468.4Q415.8 472.4 420 472Q420.7 476.4 425.2 476.2Q426.7 479.6 430.4 480.4Q431.3 484.6 435.6 484.6Q436 489.4 440.8 488.8Q441.3 493.5 446 493Q447.6 497.2 452 497.8Q452.3 503.5 458 502.5Q458.8 507.6 464 507.2Q465.4 511.7 470 512" stroke="#a82830" stroke-width="1" opacity="0.5"/>
<path d="M908 147Q903.4 150.5 905 156Q900.5 159.5 902 165Q897.9 167.7 899 172.5Q893.4 174.6 896 180Q892 182.7 894.7 186.7Q890.5 189.3 893.3 193.3Q889 195.9 892 200Q886.6 202.2 889.3 207.3Q886.3 210.4 886.7 214.7Q882.2 217.2 884 222Q879.3 223.5 881.3 228Q877.8 230 878.7 234Q874.8 235.9 876 240Q872.8 243.4 873 248Q869.4 251.2 870 256" stroke="#a82830" stroke-width="1.3" opacity="0.8"/>
<path d="M929 161Q925.9 163.4 926 167.3Q922.3 169.5 923 173.7Q919.3 175.8 920 180Q916.5 182.6 918 186.7Q914 189.1 916 193.3Q912.3 195.9 914 200Q910 202.8 912 207.3Q907.1 209.9 910 214.7Q907.1 217.8 908 222Q903.7 224.5 904.7 229.3Q899.9 231.6 901.3 236.7Q896.8 239 898 244Q893.1 245 894 250Q888.4 250.6 890 256Q885.7 257.5 886 262Q879.9 262.4 880 268.5Q875 269.9 874 275" stroke="#a82830" stroke-width="1.3" opacity="0.8"/>
<path d="M953 147Q947.7 148.3 949.5 153.5Q945 155.2 946 160Q941.4 162.5 943 167.5Q938.8 170.2 940 175Q934.7 179.2 935 186" stroke="#b02a2a" stroke-width="1.3" opacity="0.7"/>
<path d="M905 285Q900.6 287 902 291.7Q897.5 293.6 899 298.3Q895 300.6 896 305Q892.4 307.4 893.3 311.7Q888.8 313.7 890.7 318.3Q886.3 320.5 888 325Q884.4 327.4 885.3 331.7Q880.6 333.6 882.7 338.3Q879 340.7 880 345" stroke="#d04a30" stroke-width="1" opacity="0.45"/>
<path d="M893 200Q888.6 203.1 891.8 207.5Q887.9 210.7 890.5 215Q886.5 218.2 889.2 222.5Q885.9 225.8 888 230Q883.4 232 885.3 236.7Q882.3 239.3 882.7 243.3Q879 245.7 880 250" stroke="#c23a2a" stroke-width="1" opacity="0.5"/>
<path d="M40 590Q38.9 585.8 35 584Q35.9 578.2 30 578Q30.8 572.3 25 572Q24.5 568.2 21 566.6Q22.3 561.4 17 561.2Q17.3 556.8 13 555.8Q13.4 551.3 9 550.4Q10.5 545.1 5 545" stroke="#a82830" stroke-width="1.2" opacity="0.5"/>
<path d="M100 540Q98.8 536.2 95 535Q93.9 531.1 90 530Q90.3 524.7 85 525Q85.5 519.5 80 520Q79 516 75 515Q75.5 509.5 70 510Q69.2 505.8 65 505Q65.1 499.9 60 500" stroke="#b02a2a" stroke-width="1" opacity="0.4"/>
<path d="M470 520Q471.7 524.6 476.2 523Q478.1 527.2 482.5 526Q484.6 529.5 488.8 529Q491.1 532.2 495 532Q496.7 536.4 501.2 535.2Q503.4 538.7 507.5 538.5Q509.3 542.7 513.8 541.8Q515.3 546.5 520 545" stroke="#c23a2a" stroke-width="1" opacity="0.4"/>
<path d="M690 512Q693.9 514.7 696.7 510.8Q700.6 513.6 703.3 509.7Q707.3 512.6 710 508.5Q713.8 510.6 716.7 507.3Q720.6 510.4 723.3 506.2Q727.3 509.4 730 505Q733.4 507.3 737.1 505.4Q740.6 508.1 744.3 505.9Q747.7 508.1 751.4 506.3Q754.8 509.5 758.6 506.7Q762 510 765.7 507.1Q769.1 509.9 772.9 507.6Q776.2 510.9 780 508" stroke="#a82830" stroke-width="1" opacity="0.3"/>
<path d="M760 560Q764.4 560.5 766.7 556.7Q771.5 558 773.3 553.3Q778.3 555 780 550Q784.9 551.6 786.7 546.7Q791 547 793.3 543.3Q797.8 543.9 800 540Q804.4 540.4 806.7 536.7Q811.9 538.8 813.3 533.3Q818 534.4 820 530Q824.9 531.4 826.7 526.7Q831 527 833.3 523.3Q838.3 524.8 840 520" stroke="#d04a30" stroke-width="1" opacity="0.25"/>
<path d="M880 505Q883.2 507.9 887.5 507.5Q890.5 511 895 510Q898.2 512.9 902.5 512.5Q905.7 515.5 910 515Q913.6 516.9 916.7 514.2Q920.3 516.2 923.3 513.3Q927.1 516.6 930 512.5Q933.9 516.2 936.7 511.7Q940.3 513.4 943.3 510.8Q947 512.7 950 510" stroke="#c23a2a" stroke-width="1" opacity="0.25"/>
</g>
<g filter="url(#b6)" fill="none" stroke-linecap="round" stroke-linejoin="round">
<path d="M161.7 47.6 L183 78 L206.5 109 L221 123 L236.3 135.5 L255 150 L272.8 162 L288 174 L302.6 185.3 L315 200 L325.9 215" stroke="#7a1c14" stroke-width="11" opacity="0.31"/>
<path d="M199.8 52.6 L210 66 L219.7 79.1 L227 90 L233 102.3" stroke="#7a1c14" stroke-width="11" opacity="0.29"/>
<path d="M229.7 72.5 L235 77 L239.6 82.4" stroke="#7a1c14" stroke-width="11" opacity="0.25"/>
<path d="M249.6 77.5 L260 81 L269.5 89 L274 102 L276 115.6 L286 128 L296 138.8 L303 146 L309 152" stroke="#7a1c14" stroke-width="11" opacity="0.31"/>
<path d="M256 135.5 L269 150 L282.7 165.4 L296 179 L309 192" stroke="#7a1c14" stroke-width="11" opacity="0.25"/>
<path d="M221 136 L226.4 145.5 L232 154" stroke="#7a1c14" stroke-width="11" opacity="0.34"/>
<path d="M126.9 132.2 L133 147 L140 162 L146 174 L151.7 185.3 L155 209 L156.7 231.7" stroke="#7a1c14" stroke-width="11" opacity="0.27"/>
<path d="M117 168.7 L123 185 L130 201.8" stroke="#7a1c14" stroke-width="11" opacity="0.20"/>
<path d="M145 215 L148 234 L150 251.6 L156 264 L163 274.8 L173 289 L183 301" stroke="#7a1c14" stroke-width="11" opacity="0.25"/>
<path d="M136 144 L142 160 L147 172" stroke="#7a1c14" stroke-width="11" opacity="0.18"/>
<path d="M236 248 L249 253 L262.8 258 L273 266 L282.7 274.8 L290 287 L296 298" stroke="#7a1c14" stroke-width="11" opacity="0.22"/>
<path d="M247 240 L265 250 L283 260" stroke="#7a1c14" stroke-width="11" opacity="0.16"/>
<path d="M163 305 L175 322 L188 334 L196 349 L207 374 L217 398 L235 412 L253 426 L271 444 L288 462 L299 476 L306 490 L333 512 L360 533" stroke="#7a1c14" stroke-width="11" opacity="0.29"/>
<path d="M181 312 L193 339 L203 369 L217 390 L231 412 L245 434 L260 455" stroke="#7a1c14" stroke-width="11" opacity="0.20"/>
<path d="M171 296 L181 316 L189 326" stroke="#7a1c14" stroke-width="11" opacity="0.20"/>
<path d="M420 433 L439 450 L459 469 L473 480" stroke="#7a1c14" stroke-width="11" opacity="0.23"/>
<path d="M395 458 L423 476 L449 497 L473 516" stroke="#7a1c14" stroke-width="11" opacity="0.18"/>
</g>
<g filter="url(#b3)"><ellipse cx="223.500" cy="141" rx="3" ry="6" transform="rotate(-30 223.500 141)" fill="#e85030" opacity=".8"/><ellipse cx="146" cy="210" rx="2.500" ry="9" fill="#d8502c" opacity=".6"/></g>
<g filter="url(#b14)"><ellipse cx="220" cy="112" rx="60" ry="16" transform="rotate(42 220 112)" fill="#1c0404" opacity=".55"/><ellipse cx="142" cy="215" rx="12" ry="55" transform="rotate(-12 142 215)" fill="#180303" opacity=".6"/><ellipse cx="250" cy="420" rx="14" ry="80" transform="rotate(-35 250 420)" fill="#180303" opacity=".6"/></g>
<g filter="url(#b1)">
<path d="M390.7 538.3C393.9 534.3 410 530.6 421 527.6C432 524.6 444.8 522.4 456.7 520.5C468.5 518.6 480.4 518 492.3 516.2C504.2 514.4 514.9 511.8 528 509.8C541.1 507.8 563.6 503.2 570.8 504.1C577.9 504.9 577.9 511.8 570.8 514.8C563.6 517.7 541.1 518.9 528 521.9C514.9 524.9 501.8 529.4 492.3 532.6C482.8 535.8 469.7 538.2 470.9 541.2C472.1 544.1 489.9 547.6 499.4 550.4C509 553.3 516.1 555.2 528 558.3C539.9 561.4 555.9 566.4 570.8 569C585.6 571.6 603.5 569.7 617.1 574C630.8 578.2 645.7 589.4 652.8 594.7C659.9 599.9 684.3 603.6 659.9 605.4C635.6 607.1 535.7 607.6 506.6 605.4C477.5 603.1 493.5 596.1 485.2 591.8C476.9 587.5 467.4 584.1 456.7 579.7C446 575.3 430.2 570 421 565.4C411.8 560.8 406.4 556.4 401.4 551.9C396.3 547.3 387.4 542.3 390.7 538.3Z" fill="#34c4f6" opacity="1"/>
<path d="M407.4 539.7C408 536.9 422.3 535.3 431.7 533.3C441.1 531.3 453.7 529.3 463.8 527.6C473.9 525.9 484 524.5 492.3 523.3C500.6 522.1 510.1 520.2 513.7 520.5C517.3 520.7 518.5 522.6 513.7 524.8C509 526.9 492.9 530.6 485.2 533.3C477.5 536 465 538.2 467.4 541.2C469.7 544.1 489.3 548.2 499.4 551.1C509.6 554.1 517.3 555.8 528 559C538.7 562.2 552.9 565.6 563.6 570.4C574.3 575.2 586.2 581.7 592.2 587.5C598.1 593.3 607.6 602.4 599.3 605.4C591 608.3 556.5 608.1 542.2 605.4C528 602.6 523.2 594.1 513.7 588.9C504.2 583.8 494.7 579 485.2 574.7C475.7 570.4 466.2 567.3 456.7 563.3C447.1 559.2 436.3 554.4 428.1 550.4C419.9 546.5 406.8 542.6 407.4 539.7Z" fill="#e22cc8" opacity="1"/>
<path d="M421 541.2C422.2 539.5 444.8 542.5 456.7 545.4C468.5 548.4 480.4 554.1 492.3 559C504.2 563.9 516.1 568.9 528 574.7C539.9 580.5 556.5 588.8 563.6 593.9C570.8 599.1 573.2 603.5 570.8 605.4C568.4 607.3 558.9 608.8 549.4 605.4C539.9 601.9 525.6 591 513.7 584.7C501.8 578.4 488.8 572.4 478.1 567.5C467.4 562.7 459 559.8 449.5 555.4C440 551 419.8 542.8 421 541.2Z" fill="#f25ad8" opacity="0.8"/>
<path d="M563.6 573.3C564.8 570.9 577.9 575.2 585 577.5C592.2 579.9 600.5 582.9 606.4 587.5C612.4 592.2 624.3 602.4 620.7 605.4C617.1 608.3 592.2 607.6 585 605.4C577.9 603.1 581.5 597.1 577.9 591.8C574.3 586.5 562.5 575.6 563.6 573.3Z" fill="#7a3ce0" opacity="0.9"/>
<path d="M585 571.1C586.8 569 605.8 570.6 617.1 574.7C628.4 578.7 645.8 590.3 652.8 595.4C659.8 600.5 665.2 603.7 659.2 605.4C653.3 607 625.9 608.3 617.1 605.4C608.3 602.4 611.8 593.2 606.4 587.5C601.1 581.8 583.3 573.3 585 571.1Z" fill="#2f7af0" opacity="0.95"/>
<path d="M592.2 570.4C592.8 569.7 610 571.2 617.1 573.3C624.3 575.3 635.6 581.8 635 582.5C634.4 583.2 620.7 579.6 613.6 577.5C606.4 575.5 591.6 571.1 592.2 570.4Z" fill="#4ad0ff" opacity="0.9"/>
<path d="M627.8 591.8C630.8 590.3 646.3 593.8 652.8 596.1C659.3 598.3 670 603.8 667.1 605.4C664.1 606.9 641.5 607.6 635 605.4C628.4 603.1 624.9 593.3 627.8 591.8Z" fill="#2438b8" opacity="0.8"/>
<path d="M513.7 509.1C518.2 507.5 532.7 506.4 542.2 505.5C551.8 504.5 565.9 502.8 570.8 503.4C575.7 503.9 576.2 507.6 571.5 509.1C566.7 510.5 551.6 511 542.2 511.9C532.9 512.9 520.3 515.2 515.5 514.8C510.7 514.3 509.3 510.6 513.7 509.1Z" fill="#f2b4bc" opacity="0.8"/>
</g>
<path d="M469.5 541.2 L481.6 534.7 L492.3 532.6 L499.4 525.5 L506.6 528.3 L513.7 523.3 L522.6 525.5 L531.5 519.8 L542.2 521.2 L552.9 515.5 L563.6 516.2 L577.9 511.9 L849 511.9 L849 569.7 L617.1 574.7 L570.8 569.7 L528 559 L499.4 551.1Z" fill="#010102" opacity="1"/>
<path d="M367.5 605.4 L385.3 559 L394.2 545.4 L398.9 555.4 L407.4 559 L413.9 569.7 L424.6 571.8 L431.7 580.4 L444.2 581.1 L453.1 590.4 L463.8 587.5 L474.5 596.1 L485.2 593.9 L495.9 601.8 L508.4 598.2 L517.3 605.4Z" fill="#010102" opacity="1"/>
<g filter="url(#b1)"><circle cx="367" cy="3" r="3.7" fill="#9ab4ff" opacity=".55"/><circle cx="303" cy="16.5" r="3.2" fill="#9ab4ff" opacity=".55"/><circle cx="384" cy="37" r="4.4" fill="#9ab4ff" opacity=".55"/><circle cx="464" cy="59" r="3.4" fill="#9ab4ff" opacity=".55"/><circle cx="462" cy="78" r="2.7" fill="#9ab4ff" opacity=".55"/><circle cx="426" cy="26" r="2.4" fill="#9ab4ff" opacity=".55"/><circle cx="484" cy="48" r="2.4" fill="#9ab4ff" opacity=".55"/><circle cx="513" cy="71" r="2.2" fill="#9ab4ff" opacity=".55"/><circle cx="341" cy="206" r="3.1" fill="#9ab4ff" opacity=".55"/><circle cx="332" cy="266" r="2.7" fill="#9ab4ff" opacity=".55"/><circle cx="516" cy="10" r="2" fill="#9ab4ff" opacity=".55"/><circle cx="694" cy="8" r="2.5" fill="#9ab4ff" opacity=".55"/><circle cx="771" cy="19" r="1.7" fill="#9ab4ff" opacity=".55"/><circle cx="803" cy="35" r="1.9" fill="#9ab4ff" opacity=".55"/><circle cx="779" cy="50" r="1.7" fill="#9ab4ff" opacity=".55"/><circle cx="849" cy="6" r="1.7" fill="#9ab4ff" opacity=".55"/><circle cx="386" cy="196" r="2" fill="#9ab4ff" opacity=".55"/><circle cx="306" cy="240" r="1.9" fill="#9ab4ff" opacity=".55"/></g>
<g><circle cx="367" cy="3" r="1.7600000000000002" fill="#fff" opacity="1.00"/><circle cx="303" cy="16.5" r="1.52" fill="#fff" opacity="1.00"/><circle cx="384" cy="37" r="2.08" fill="#fff" opacity="1.00"/><circle cx="464" cy="59" r="1.6" fill="#fff" opacity="1.00"/><circle cx="462" cy="78" r="1.2800000000000002" fill="#fff" opacity="1.00"/><circle cx="426" cy="26" r="1.1199999999999999" fill="#fff" opacity="1.00"/><circle cx="484" cy="48" r="1.1199999999999999" fill="#fff" opacity="1.00"/><circle cx="513" cy="71" r="1.04" fill="#fff" opacity="1.00"/><circle cx="341" cy="206" r="1.4400000000000002" fill="#fff" opacity="1.00"/><circle cx="332" cy="266" r="1.2800000000000002" fill="#fff" opacity="1.00"/><circle cx="516" cy="10" r="0.96" fill="#fff" opacity="1.00"/><circle cx="694" cy="8" r="1.2000000000000002" fill="#fff" opacity="1.00"/><circle cx="771" cy="19" r="0.8" fill="#fff" opacity="1.00"/><circle cx="803" cy="35" r="0.8800000000000001" fill="#fff" opacity="1.00"/><circle cx="779" cy="50" r="0.8" fill="#fff" opacity="1.00"/><circle cx="849" cy="6" r="0.8" fill="#fff" opacity="1.00"/><circle cx="386" cy="196" r="0.96" fill="#fff" opacity="1.00"/><circle cx="306" cy="240" r="0.8800000000000001" fill="#fff" opacity="1.00"/><circle cx="524" cy="48.5" r="0.5" fill="#fff" opacity="0.71"/><circle cx="899.8" cy="43.8" r="0.5" fill="#ffe8f0" opacity="0.49"/><circle cx="566" cy="14.8" r="0.5" fill="#ffe8f0" opacity="0.61"/><circle cx="485.6" cy="74.4" r="0.5" fill="#ffe8f0" opacity="0.49"/><circle cx="720.3" cy="45.3" r="0.6" fill="#fff" opacity="0.29"/><circle cx="599.9" cy="55.7" r="0.9" fill="#fff" opacity="0.50"/><circle cx="311.6" cy="20.9" r="0.9" fill="#ffe8f0" opacity="0.58"/><circle cx="650.8" cy="74.9" r="0.6" fill="#dfe6ff" opacity="0.41"/><circle cx="427.2" cy="64.4" r="0.6" fill="#fff" opacity="0.45"/><circle cx="511.2" cy="43.2" r="0.8" fill="#ffe8f0" opacity="0.76"/><circle cx="604.8" cy="78.7" r="0.6" fill="#dfe6ff" opacity="0.50"/><circle cx="573.7" cy="91.6" r="0.8" fill="#ffe8f0" opacity="0.39"/><circle cx="723.7" cy="78" r="0.9" fill="#cfd8ff" opacity="0.56"/><circle cx="687.9" cy="82" r="0.8" fill="#fff" opacity="0.35"/><circle cx="709.6" cy="94.7" r="0.9" fill="#cfd8ff" opacity="0.71"/><circle cx="301.9" cy="53.6" r="0.8" fill="#fff" opacity="0.30"/><circle cx="471.7" cy="10.3" r="0.6" fill="#dfe6ff" opacity="0.30"/><circle cx="328.9" cy="80" r="0.7" fill="#dfe6ff" opacity="0.38"/><circle cx="646.1" cy="89" r="0.6" fill="#cfd8ff" opacity="0.67"/><circle cx="533.9" cy="79.1" r="0.6" fill="#cfd8ff" opacity="0.62"/><circle cx="645.3" cy="78.9" r="0.45" fill="#fff" opacity="0.64"/><circle cx="582.6" cy="81" r="0.9" fill="#fff" opacity="0.44"/><circle cx="902.8" cy="81.7" r="0.8" fill="#ffe8f0" opacity="0.60"/><circle cx="590.6" cy="14.3" r="0.9" fill="#cfd8ff" opacity="0.34"/><circle cx="678.5" cy="26.9" r="0.45" fill="#fff" opacity="0.51"/><circle cx="495.8" cy="15.2" r="0.5" fill="#cfd8ff" opacity="0.75"/><circle cx="263.9" cy="47.1" r="0.6" fill="#dfe6ff" opacity="0.31"/><circle cx="541" cy="57.7" r="0.8" fill="#dfe6ff" opacity="0.64"/><circle cx="608" cy="87.7" r="0.7" fill="#ffe8f0" opacity="0.34"/><circle cx="757.7" cy="92.3" r="0.8" fill="#ffe8f0" opacity="0.51"/><circle cx="642.7" cy="39.5" r="0.6" fill="#fff" opacity="0.61"/><circle cx="640.9" cy="21.7" r="0.45" fill="#dfe6ff" opacity="0.37"/><circle cx="667.8" cy="26.9" r="0.45" fill="#dfe6ff" opacity="0.61"/><circle cx="972.7" cy="85.7" r="0.7" fill="#cfd8ff" opacity="0.69"/><circle cx="740.9" cy="15.4" r="0.5" fill="#dfe6ff" opacity="0.67"/><circle cx="460.1" cy="85.2" r="0.8" fill="#ffe8f0" opacity="0.32"/><circle cx="667.9" cy="5.2" r="0.8" fill="#fff" opacity="0.67"/><circle cx="415.5" cy="89.8" r="0.5" fill="#fff" opacity="0.70"/><circle cx="534.9" cy="60.3" r="0.8" fill="#cfd8ff" opacity="0.30"/><circle cx="690.2" cy="49.6" r="0.45" fill="#cfd8ff" opacity="0.68"/><circle cx="406.4" cy="66.9" r="0.7" fill="#cfd8ff" opacity="0.36"/><circle cx="675.8" cy="15.4" r="0.6" fill="#cfd8ff" opacity="0.42"/><circle cx="311.6" cy="30" r="0.7" fill="#fff" opacity="0.62"/><circle cx="541.4" cy="67.3" r="0.45" fill="#cfd8ff" opacity="0.62"/><circle cx="610.7" cy="84.6" r="0.9" fill="#dfe6ff" opacity="0.64"/><circle cx="487.7" cy="11.1" r="0.45" fill="#dfe6ff" opacity="0.72"/><circle cx="1009.3" cy="73.5" r="0.7" fill="#fff" opacity="0.56"/><circle cx="457.7" cy="19.6" r="0.9" fill="#ffe8f0" opacity="0.31"/><circle cx="518.6" cy="81" r="0.45" fill="#fff" opacity="0.31"/><circle cx="356.5" cy="61.8" r="0.5" fill="#cfd8ff" opacity="0.35"/><circle cx="279.5" cy="45.4" r="0.45" fill="#dfe6ff" opacity="0.37"/><circle cx="1049.8" cy="42.5" r="0.6" fill="#cfd8ff" opacity="0.76"/><circle cx="369.9" cy="67.7" r="0.7" fill="#cfd8ff" opacity="0.43"/><circle cx="754.7" cy="71.2" r="0.8" fill="#dfe6ff" opacity="0.63"/><circle cx="518.1" cy="33.5" r="0.9" fill="#cfd8ff" opacity="0.49"/><circle cx="416" cy="32.6" r="0.6" fill="#dfe6ff" opacity="0.70"/><circle cx="455.6" cy="52.8" r="0.6" fill="#ffe8f0" opacity="0.55"/><circle cx="745.7" cy="50.3" r="0.8" fill="#dfe6ff" opacity="0.64"/><circle cx="709.6" cy="2.6" r="0.9" fill="#fff" opacity="0.36"/><circle cx="360.4" cy="46.8" r="0.7" fill="#ffe8f0" opacity="0.63"/><circle cx="324.3" cy="85.5" r="0.6" fill="#fff" opacity="0.50"/><circle cx="616.4" cy="71.5" r="0.5" fill="#fff" opacity="0.75"/><circle cx="703.9" cy="25.9" r="0.9" fill="#ffe8f0" opacity="0.80"/><circle cx="737.2" cy="12" r="0.45" fill="#ffe8f0" opacity="0.41"/><circle cx="445.1" cy="56.2" r="0.5" fill="#fff" opacity="0.35"/><circle cx="618" cy="39.5" r="0.9" fill="#cfd8ff" opacity="0.33"/><circle cx="748.3" cy="62.8" r="0.45" fill="#cfd8ff" opacity="0.34"/><circle cx="629.1" cy="14" r="0.7" fill="#cfd8ff" opacity="0.32"/><circle cx="390.7" cy="50.9" r="0.6" fill="#ffe8f0" opacity="0.38"/><circle cx="293.3" cy="76.8" r="0.5" fill="#cfd8ff" opacity="0.47"/><circle cx="736.1" cy="46.1" r="0.7" fill="#cfd8ff" opacity="0.74"/><circle cx="858.9" cy="47.6" r="0.9" fill="#cfd8ff" opacity="0.47"/><circle cx="345.1" cy="11.2" r="0.8" fill="#cfd8ff" opacity="0.43"/><circle cx="590.5" cy="2.4" r="0.45" fill="#cfd8ff" opacity="0.41"/><circle cx="842.9" cy="58.6" r="0.6" fill="#fff" opacity="0.74"/><circle cx="447.9" cy="82.7" r="0.5" fill="#cfd8ff" opacity="0.53"/><circle cx="1011.6" cy="86.2" r="0.9" fill="#ffe8f0" opacity="0.78"/><circle cx="951.9" cy="41.3" r="0.5" fill="#cfd8ff" opacity="0.61"/><circle cx="709.1" cy="88.5" r="0.45" fill="#dfe6ff" opacity="0.54"/><circle cx="350.3" cy="52.7" r="0.7" fill="#dfe6ff" opacity="0.25"/><circle cx="607" cy="44.1" r="0.8" fill="#ffe8f0" opacity="0.47"/><circle cx="618.4" cy="30.8" r="0.6" fill="#cfd8ff" opacity="0.52"/><circle cx="961.8" cy="19.9" r="0.9" fill="#dfe6ff" opacity="0.74"/><circle cx="505.9" cy="84.2" r="0.7" fill="#dfe6ff" opacity="0.26"/><circle cx="681.8" cy="23.1" r="0.45" fill="#ffe8f0" opacity="0.61"/><circle cx="837.9" cy="30.7" r="0.7" fill="#dfe6ff" opacity="0.64"/><circle cx="521.3" cy="93.8" r="0.7" fill="#dfe6ff" opacity="0.48"/><circle cx="430.8" cy="30.1" r="0.9" fill="#ffe8f0" opacity="0.63"/><circle cx="396.6" cy="23.1" r="0.9" fill="#ffe8f0" opacity="0.41"/><circle cx="551.7" cy="64.9" r="0.45" fill="#dfe6ff" opacity="0.57"/><circle cx="433" cy="13" r="0.9" fill="#fff" opacity="0.30"/><circle cx="606.7" cy="51.8" r="0.8" fill="#fff" opacity="0.75"/><circle cx="735.8" cy="27.9" r="0.6" fill="#fff" opacity="0.48"/><circle cx="383.3" cy="96.9" r="0.5" fill="#ffe8f0" opacity="0.39"/><circle cx="844.7" cy="2.8" r="0.5" fill="#fff" opacity="0.79"/><circle cx="753.7" cy="89.8" r="0.8" fill="#cfd8ff" opacity="0.46"/><circle cx="298.8" cy="6.3" r="0.6" fill="#cfd8ff" opacity="0.43"/><circle cx="1020.7" cy="17" r="0.5" fill="#cfd8ff" opacity="0.31"/><circle cx="440.6" cy="43.2" r="0.6" fill="#dfe6ff" opacity="0.68"/><circle cx="460.3" cy="53.3" r="0.8" fill="#ffe8f0" opacity="0.58"/><circle cx="278.6" cy="58.5" r="0.8" fill="#dfe6ff" opacity="0.50"/><circle cx="513.3" cy="59.6" r="0.8" fill="#cfd8ff" opacity="0.52"/><circle cx="658" cy="70.9" r="0.45" fill="#dfe6ff" opacity="0.29"/><circle cx="710.8" cy="53.2" r="0.9" fill="#dfe6ff" opacity="0.38"/><circle cx="913.9" cy="72.4" r="0.8" fill="#dfe6ff" opacity="0.52"/><circle cx="556.9" cy="24.3" r="0.7" fill="#cfd8ff" opacity="0.63"/><circle cx="425.2" cy="95.1" r="0.45" fill="#dfe6ff" opacity="0.32"/><circle cx="367.1" cy="44.6" r="0.9" fill="#fff" opacity="0.79"/><circle cx="444.9" cy="87.2" r="0.5" fill="#ffe8f0" opacity="0.30"/><circle cx="632.2" cy="91.7" r="0.45" fill="#dfe6ff" opacity="0.62"/><circle cx="489.5" cy="11.6" r="0.5" fill="#fff" opacity="0.48"/><circle cx="576.5" cy="63.7" r="0.45" fill="#dfe6ff" opacity="0.66"/><circle cx="624.7" cy="38.5" r="0.5" fill="#fff" opacity="0.46"/><circle cx="424.5" cy="34" r="0.5" fill="#dfe6ff" opacity="0.69"/><circle cx="639" cy="39.2" r="0.8" fill="#ffe8f0" opacity="0.51"/><circle cx="632.8" cy="48" r="0.9" fill="#cfd8ff" opacity="0.62"/><circle cx="415.7" cy="37.5" r="0.45" fill="#ffe8f0" opacity="0.28"/><circle cx="543.9" cy="26.9" r="0.45" fill="#ffe8f0" opacity="0.54"/><circle cx="664.8" cy="55.6" r="0.9" fill="#ffe8f0" opacity="0.64"/><circle cx="333.8" cy="5.6" r="0.9" fill="#ffe8f0" opacity="0.77"/><circle cx="361" cy="23.6" r="0.45" fill="#ffe8f0" opacity="0.26"/><circle cx="929.4" cy="44.1" r="0.7" fill="#fff" opacity="0.43"/><circle cx="494.8" cy="59.6" r="0.7" fill="#dfe6ff" opacity="0.27"/><circle cx="666.3" cy="12.5" r="0.5" fill="#cfd8ff" opacity="0.42"/><circle cx="637.7" cy="68" r="0.8" fill="#ffe8f0" opacity="0.64"/><circle cx="504.2" cy="44.3" r="0.7" fill="#dfe6ff" opacity="0.33"/><circle cx="360.7" cy="50.6" r="0.6" fill="#ffe8f0" opacity="0.37"/><circle cx="550.1" cy="59.9" r="0.5" fill="#fff" opacity="0.27"/><circle cx="304.2" cy="83.6" r="0.8" fill="#fff" opacity="0.63"/><circle cx="567.9" cy="5.9" r="0.7" fill="#ffe8f0" opacity="0.76"/><circle cx="652.7" cy="27.4" r="0.5" fill="#dfe6ff" opacity="0.76"/><circle cx="634.9" cy="16.3" r="0.9" fill="#fff" opacity="0.64"/><circle cx="851.6" cy="88.9" r="0.7" fill="#ffe8f0" opacity="0.57"/><circle cx="545.1" cy="6.2" r="0.7" fill="#cfd8ff" opacity="0.40"/><circle cx="651.4" cy="57.4" r="0.7" fill="#ffe8f0" opacity="0.65"/><circle cx="308.5" cy="3.5" r="0.6" fill="#ffe8f0" opacity="0.74"/><circle cx="462.1" cy="65.5" r="0.5" fill="#cfd8ff" opacity="0.60"/><circle cx="748.4" cy="93.6" r="0.6" fill="#dfe6ff" opacity="0.27"/><circle cx="582.9" cy="40.7" r="0.6" fill="#cfd8ff" opacity="0.29"/><circle cx="962.6" cy="37.4" r="0.45" fill="#ffe8f0" opacity="0.69"/><circle cx="500" cy="35.3" r="0.45" fill="#dfe6ff" opacity="0.33"/><circle cx="468.5" cy="25.3" r="0.5" fill="#fff" opacity="0.38"/><circle cx="693.1" cy="83.2" r="0.8" fill="#ffe8f0" opacity="0.29"/><circle cx="463.9" cy="10.2" r="0.45" fill="#dfe6ff" opacity="0.42"/><circle cx="813.3" cy="67.3" r="0.5" fill="#cfd8ff" opacity="0.34"/><circle cx="547.1" cy="65.5" r="0.7" fill="#dfe6ff" opacity="0.38"/><circle cx="543.4" cy="69.2" r="0.8" fill="#fff" opacity="0.66"/><circle cx="1051.2" cy="80.1" r="0.6" fill="#cfd8ff" opacity="0.31"/><circle cx="665" cy="66.6" r="0.45" fill="#cfd8ff" opacity="0.34"/><circle cx="661" cy="78.1" r="0.7" fill="#ffe8f0" opacity="0.39"/><circle cx="547.8" cy="66.9" r="0.5" fill="#dfe6ff" opacity="0.43"/><circle cx="590.7" cy="69.3" r="0.8" fill="#ffe8f0" opacity="0.66"/><circle cx="261.1" cy="57.4" r="0.5" fill="#ffe8f0" opacity="0.40"/><circle cx="589.6" cy="61.9" r="0.7" fill="#dfe6ff" opacity="0.46"/><circle cx="284.3" cy="28" r="0.45" fill="#fff" opacity="0.47"/><circle cx="304.6" cy="43" r="0.9" fill="#cfd8ff" opacity="0.41"/><circle cx="716.9" cy="66.1" r="0.5" fill="#dfe6ff" opacity="0.55"/><circle cx="608.2" cy="81.7" r="0.8" fill="#ffe8f0" opacity="0.76"/><circle cx="471.8" cy="39.2" r="0.6" fill="#cfd8ff" opacity="0.38"/><circle cx="412.9" cy="54" r="0.8" fill="#fff" opacity="0.28"/><circle cx="701.5" cy="21.1" r="0.8" fill="#ffe8f0" opacity="0.61"/><circle cx="474.5" cy="92" r="0.5" fill="#cfd8ff" opacity="0.80"/><circle cx="712.7" cy="92.2" r="0.45" fill="#fff" opacity="0.35"/><circle cx="469.5" cy="2.4" r="0.8" fill="#cfd8ff" opacity="0.42"/><circle cx="258.5" cy="20.6" r="0.45" fill="#ffe8f0" opacity="0.67"/><circle cx="573.4" cy="78.7" r="0.9" fill="#fff" opacity="0.67"/><circle cx="1008.3" cy="47.2" r="0.7" fill="#fff" opacity="0.39"/><circle cx="502.8" cy="6.5" r="0.9" fill="#fff" opacity="0.43"/><circle cx="464.3" cy="20.9" r="0.5" fill="#dfe6ff" opacity="0.37"/><circle cx="692.5" cy="66.7" r="0.5" fill="#dfe6ff" opacity="0.44"/><circle cx="365.8" cy="34.3" r="0.7" fill="#cfd8ff" opacity="0.26"/><circle cx="657.1" cy="39.5" r="0.6" fill="#dfe6ff" opacity="0.77"/><circle cx="727.2" cy="56.7" r="0.6" fill="#dfe6ff" opacity="0.49"/><circle cx="654.4" cy="76.5" r="0.5" fill="#fff" opacity="0.70"/><circle cx="398.6" cy="35" r="0.45" fill="#cfd8ff" opacity="0.33"/><circle cx="529.1" cy="43.1" r="0.9" fill="#fff" opacity="0.60"/><circle cx="348.4" cy="72.4" r="0.9" fill="#cfd8ff" opacity="0.50"/><circle cx="589.7" cy="37.7" r="0.5" fill="#fff" opacity="0.46"/><circle cx="667.3" cy="3.2" r="0.9" fill="#ffe8f0" opacity="0.50"/><circle cx="730.6" cy="58.3" r="0.6" fill="#cfd8ff" opacity="0.33"/><circle cx="515.8" cy="25.1" r="0.8" fill="#cfd8ff" opacity="0.42"/><circle cx="1051.4" cy="39.4" r="0.5" fill="#cfd8ff" opacity="0.66"/><circle cx="340" cy="18.3" r="0.9" fill="#dfe6ff" opacity="0.68"/><circle cx="1054.9" cy="6.4" r="0.9" fill="#ffe8f0" opacity="0.44"/><circle cx="617.8" cy="52.6" r="0.7" fill="#ffe8f0" opacity="0.36"/><circle cx="606.8" cy="74.2" r="0.5" fill="#cfd8ff" opacity="0.29"/><circle cx="546.3" cy="9.8" r="0.45" fill="#dfe6ff" opacity="0.76"/><circle cx="564.8" cy="83.2" r="0.8" fill="#cfd8ff" opacity="0.51"/><circle cx="308.2" cy="96.8" r="0.5" fill="#ffe8f0" opacity="0.54"/><circle cx="525.1" cy="30.9" r="0.9" fill="#dfe6ff" opacity="0.77"/><circle cx="344" cy="92.2" r="0.8" fill="#ffe8f0" opacity="0.59"/><circle cx="408.9" cy="97.5" r="0.9" fill="#ffe8f0" opacity="0.36"/><circle cx="307.9" cy="26.1" r="0.6" fill="#cfd8ff" opacity="0.70"/><circle cx="476.2" cy="13.1" r="0.45" fill="#ffe8f0" opacity="0.77"/><circle cx="666.2" cy="41" r="0.7" fill="#ffe8f0" opacity="0.57"/><circle cx="349.8" cy="85.9" r="0.45" fill="#cfd8ff" opacity="0.62"/><circle cx="432.8" cy="46.8" r="0.5" fill="#dfe6ff" opacity="0.66"/><circle cx="613.2" cy="6.3" r="0.7" fill="#cfd8ff" opacity="0.43"/><circle cx="553.6" cy="58.1" r="0.6" fill="#ffe8f0" opacity="0.46"/><circle cx="526.7" cy="80.4" r="0.8" fill="#fff" opacity="0.31"/><circle cx="377" cy="167" r="0.8" fill="#ffd8f0" opacity="0.31"/><circle cx="305.1" cy="288.9" r="0.8" fill="#ffd8f0" opacity="0.75"/><circle cx="438.7" cy="379.4" r="0.6" fill="#ffd8f0" opacity="0.51"/><circle cx="361.5" cy="248.7" r="0.8" fill="#ffd8f0" opacity="0.52"/><circle cx="410.8" cy="119.5" r="0.6" fill="#ffd8f0" opacity="0.74"/><circle cx="468.7" cy="226.4" r="0.6" fill="#ffd8f0" opacity="0.59"/><circle cx="311.3" cy="247.9" r="1" fill="#ffd8f0" opacity="0.66"/><circle cx="458.4" cy="265.7" r="0.6" fill="#ffd8f0" opacity="0.52"/><circle cx="441.2" cy="265" r="0.5" fill="#ffd8f0" opacity="0.63"/><circle cx="314.2" cy="153.4" r="0.8" fill="#ffd8f0" opacity="0.60"/><circle cx="464.9" cy="251.6" r="0.5" fill="#ffd8f0" opacity="0.49"/><circle cx="326.5" cy="218.7" r="0.8" fill="#ffd8f0" opacity="0.73"/><circle cx="452.3" cy="107.7" r="0.8" fill="#ffd8f0" opacity="0.49"/><circle cx="432" cy="130.2" r="0.5" fill="#ffd8f0" opacity="0.33"/><circle cx="340.4" cy="312.1" r="0.8" fill="#ffd8f0" opacity="0.43"/><circle cx="432.2" cy="179" r="1" fill="#ffd8f0" opacity="0.51"/><circle cx="468.3" cy="288.4" r="0.6" fill="#ffd8f0" opacity="0.55"/><circle cx="378.1" cy="372.2" r="0.5" fill="#ffd8f0" opacity="0.66"/><circle cx="385.6" cy="146.1" r="0.6" fill="#ffd8f0" opacity="0.48"/><circle cx="404.1" cy="376.4" r="0.5" fill="#ffd8f0" opacity="0.49"/><circle cx="301.8" cy="149.2" r="0.5" fill="#ffd8f0" opacity="0.63"/><circle cx="421.1" cy="150.1" r="0.5" fill="#ffd8f0" opacity="0.48"/><circle cx="392.3" cy="344" r="0.5" fill="#ffd8f0" opacity="0.48"/><circle cx="350.9" cy="168.7" r="0.5" fill="#ffd8f0" opacity="0.60"/><circle cx="395.2" cy="144.1" r="0.5" fill="#ffd8f0" opacity="0.48"/><circle cx="350.9" cy="336.6" r="0.8" fill="#ffd8f0" opacity="0.40"/><circle cx="365.4" cy="307.6" r="0.8" fill="#ffd8f0" opacity="0.50"/><circle cx="310.5" cy="268.9" r="0.8" fill="#ffd8f0" opacity="0.48"/><circle cx="337.9" cy="131.7" r="0.8" fill="#ffd8f0" opacity="0.31"/><circle cx="388.4" cy="268.6" r="0.5" fill="#ffd8f0" opacity="0.47"/><circle cx="400.9" cy="133.6" r="0.8" fill="#ffd8f0" opacity="0.73"/><circle cx="362.2" cy="291.4" r="0.8" fill="#ffd8f0" opacity="0.68"/><circle cx="335.7" cy="344.1" r="0.5" fill="#ffd8f0" opacity="0.44"/><circle cx="384.6" cy="265.2" r="0.8" fill="#ffd8f0" opacity="0.32"/><circle cx="315.8" cy="180.6" r="0.8" fill="#ffd8f0" opacity="0.66"/><circle cx="460.4" cy="307.1" r="0.8" fill="#ffd8f0" opacity="0.48"/><circle cx="348.6" cy="317.6" r="0.5" fill="#ffd8f0" opacity="0.48"/><circle cx="338.3" cy="180.1" r="0.5" fill="#ffd8f0" opacity="0.44"/><circle cx="439.3" cy="352.3" r="0.8" fill="#ffd8f0" opacity="0.33"/><circle cx="429.8" cy="115.3" r="0.5" fill="#ffd8f0" opacity="0.55"/><circle cx="457.6" cy="304.4" r="0.5" fill="#ffd8f0" opacity="0.58"/><circle cx="416.1" cy="167.7" r="0.5" fill="#ffd8f0" opacity="0.67"/><circle cx="381.5" cy="207.3" r="0.5" fill="#ffd8f0" opacity="0.38"/><circle cx="314.2" cy="319.3" r="0.6" fill="#ffd8f0" opacity="0.47"/><circle cx="376.1" cy="239.8" r="0.5" fill="#ffd8f0" opacity="0.50"/><circle cx="452.5" cy="332.9" r="0.5" fill="#ffd8f0" opacity="0.73"/><circle cx="421" cy="325" r="1" fill="#ffd8f0" opacity="0.44"/><circle cx="462.2" cy="279.3" r="0.6" fill="#ffd8f0" opacity="0.34"/><circle cx="355.1" cy="144.8" r="0.5" fill="#ffd8f0" opacity="0.37"/><circle cx="346.6" cy="230.4" r="1" fill="#ffd8f0" opacity="0.72"/><circle cx="334" cy="324.9" r="1" fill="#ffd8f0" opacity="0.52"/><circle cx="417.2" cy="224.2" r="1" fill="#ffd8f0" opacity="0.35"/><circle cx="426.2" cy="153.3" r="0.8" fill="#ffd8f0" opacity="0.39"/><circle cx="358.9" cy="152.4" r="0.8" fill="#ffd8f0" opacity="0.47"/><circle cx="436.5" cy="318.8" r="1" fill="#ffd8f0" opacity="0.56"/><circle cx="443.2" cy="214.6" r="0.6" fill="#ffd8f0" opacity="0.52"/><circle cx="466.7" cy="205" r="1" fill="#ffd8f0" opacity="0.41"/><circle cx="344.4" cy="333.7" r="0.5" fill="#ffd8f0" opacity="0.42"/><circle cx="364.2" cy="329.3" r="1" fill="#ffd8f0" opacity="0.71"/><circle cx="311.1" cy="157.5" r="1" fill="#ffd8f0" opacity="0.71"/><circle cx="961.2" cy="293.1" r="0.5" fill="#aaa" opacity="0.12"/><circle cx="890.5" cy="184.5" r="0.5" fill="#aaa" opacity="0.09"/><circle cx="940.4" cy="96.1" r="0.6" fill="#c04040" opacity="0.15"/><circle cx="959.3" cy="584.4" r="0.6" fill="#c04040" opacity="0.24"/><circle cx="919.4" cy="94" r="0.5" fill="#aaa" opacity="0.25"/><circle cx="992" cy="72.7" r="0.5" fill="#8080c0" opacity="0.20"/><circle cx="1007.9" cy="219.1" r="0.7" fill="#aaa" opacity="0.24"/><circle cx="1041.5" cy="437.6" r="0.6" fill="#8080c0" opacity="0.10"/><circle cx="874.1" cy="323.4" r="0.6" fill="#8080c0" opacity="0.21"/><circle cx="920.6" cy="79.2" r="0.6" fill="#c04040" opacity="0.10"/><circle cx="927" cy="167.1" r="0.7" fill="#8080c0" opacity="0.11"/><circle cx="902" cy="517.5" r="0.5" fill="#aaa" opacity="0.20"/><circle cx="1030" cy="98" r="0.7" fill="#aaa" opacity="0.22"/><circle cx="1025" cy="156.4" r="0.5" fill="#8080c0" opacity="0.17"/><circle cx="1000.4" cy="326.6" r="0.6" fill="#8080c0" opacity="0.17"/><circle cx="939.1" cy="130.1" r="0.7" fill="#aaa" opacity="0.18"/><circle cx="1015.3" cy="533.1" r="0.5" fill="#c04040" opacity="0.27"/><circle cx="985" cy="557.8" r="0.7" fill="#c04040" opacity="0.09"/><circle cx="890.4" cy="340.4" r="0.5" fill="#8080c0" opacity="0.12"/><circle cx="931.9" cy="525" r="0.5" fill="#aaa" opacity="0.27"/><circle cx="883.6" cy="17.9" r="0.7" fill="#aaa" opacity="0.11"/><circle cx="1064.8" cy="586.7" r="0.7" fill="#8080c0" opacity="0.19"/><circle cx="975.4" cy="111.1" r="0.7" fill="#aaa" opacity="0.22"/><circle cx="969.8" cy="118.9" r="0.7" fill="#c04040" opacity="0.10"/><circle cx="967.2" cy="47.4" r="0.6" fill="#aaa" opacity="0.09"/><circle cx="887.8" cy="541.4" r="0.6" fill="#aaa" opacity="0.15"/><circle cx="924.5" cy="91" r="0.7" fill="#c04040" opacity="0.27"/><circle cx="1041.7" cy="562.8" r="0.5" fill="#aaa" opacity="0.20"/><circle cx="1069.3" cy="344" r="0.7" fill="#c04040" opacity="0.14"/><circle cx="887.3" cy="312.6" r="0.5" fill="#8080c0" opacity="0.10"/><circle cx="1043.8" cy="576.2" r="0.5" fill="#c04040" opacity="0.16"/><circle cx="1035.9" cy="414.5" r="0.7" fill="#aaa" opacity="0.25"/><circle cx="1031.6" cy="0.4" r="0.5" fill="#c04040" opacity="0.27"/><circle cx="1065.1" cy="501.7" r="0.6" fill="#c04040" opacity="0.15"/><circle cx="939.3" cy="9" r="0.5" fill="#aaa" opacity="0.13"/><circle cx="943.9" cy="435.2" r="0.7" fill="#8080c0" opacity="0.21"/><circle cx="1000.3" cy="560.5" r="0.6" fill="#c04040" opacity="0.12"/><circle cx="912.3" cy="271.7" r="0.5" fill="#8080c0" opacity="0.24"/><circle cx="907" cy="408.2" r="0.7" fill="#aaa" opacity="0.13"/><circle cx="984.9" cy="345.2" r="0.5" fill="#c04040" opacity="0.12"/><circle cx="883.2" cy="306.8" r="0.7" fill="#aaa" opacity="0.23"/><circle cx="876.9" cy="149.2" r="0.5" fill="#aaa" opacity="0.10"/><circle cx="918.9" cy="131.1" r="0.6" fill="#c04040" opacity="0.19"/><circle cx="944.1" cy="214.6" r="0.5" fill="#8080c0" opacity="0.28"/><circle cx="1070" cy="252.3" r="0.7" fill="#8080c0" opacity="0.24"/><circle cx="1068.5" cy="124.6" r="0.6" fill="#aaa" opacity="0.19"/><circle cx="883.6" cy="586.6" r="0.5" fill="#c04040" opacity="0.09"/><circle cx="946.1" cy="39.2" r="0.5" fill="#c04040" opacity="0.11"/><circle cx="902" cy="296.7" r="0.5" fill="#8080c0" opacity="0.27"/><circle cx="897.7" cy="82" r="0.7" fill="#c04040" opacity="0.14"/><circle cx="206.2" cy="518.2" r="0.7" fill="#aaa" opacity="0.11"/><circle cx="947.6" cy="569.8" r="0.6" fill="#c04040" opacity="0.13"/><circle cx="988.4" cy="519.2" r="0.5" fill="#aaa" opacity="0.22"/><circle cx="371.9" cy="509.8" r="0.6" fill="#aaa" opacity="0.12"/><circle cx="131.4" cy="556.1" r="0.7" fill="#8080c0" opacity="0.19"/><circle cx="815.6" cy="556.1" r="0.5" fill="#c04040" opacity="0.09"/><circle cx="17.7" cy="594.4" r="0.7" fill="#c04040" opacity="0.15"/><circle cx="1032.7" cy="566.9" r="0.5" fill="#aaa" opacity="0.12"/><circle cx="491.9" cy="563.5" r="0.6" fill="#c04040" opacity="0.15"/><circle cx="157.7" cy="550.5" r="0.7" fill="#aaa" opacity="0.08"/><circle cx="428.6" cy="510" r="0.5" fill="#8080c0" opacity="0.09"/><circle cx="787.9" cy="525.5" r="0.5" fill="#8080c0" opacity="0.08"/><circle cx="855.1" cy="553.4" r="0.7" fill="#c04040" opacity="0.09"/><circle cx="195.3" cy="506.5" r="0.6" fill="#8080c0" opacity="0.22"/><circle cx="278.8" cy="565" r="0.6" fill="#8080c0" opacity="0.18"/><circle cx="667.6" cy="535.8" r="0.6" fill="#aaa" opacity="0.10"/><circle cx="621.6" cy="545.4" r="0.7" fill="#8080c0" opacity="0.16"/><circle cx="355.7" cy="593.6" r="0.5" fill="#aaa" opacity="0.17"/><circle cx="912.7" cy="590.6" r="0.5" fill="#aaa" opacity="0.15"/><circle cx="1053.5" cy="533" r="0.5" fill="#8080c0" opacity="0.21"/><circle cx="251.6" cy="561.6" r="0.5" fill="#8080c0" opacity="0.18"/><circle cx="303.9" cy="514.4" r="0.7" fill="#8080c0" opacity="0.08"/><circle cx="598.5" cy="553.2" r="0.7" fill="#aaa" opacity="0.17"/><circle cx="1.8" cy="553.2" r="0.6" fill="#aaa" opacity="0.15"/><circle cx="608.5" cy="510.5" r="0.6" fill="#8080c0" opacity="0.15"/><circle cx="66.1" cy="518.9" r="0.5" fill="#8080c0" opacity="0.12"/><circle cx="53.8" cy="532.2" r="0.5" fill="#8080c0" opacity="0.11"/><circle cx="853.8" cy="529.7" r="0.7" fill="#8080c0" opacity="0.15"/><circle cx="377.8" cy="510.6" r="0.5" fill="#8080c0" opacity="0.15"/><circle cx="162.1" cy="535.7" r="0.7" fill="#8080c0" opacity="0.15"/><circle cx="991.2" cy="567.7" r="0.7" fill="#8080c0" opacity="0.20"/><circle cx="1047.2" cy="594" r="0.7" fill="#aaa" opacity="0.11"/><circle cx="761.5" cy="583.5" r="0.5" fill="#8080c0" opacity="0.10"/><circle cx="324.5" cy="528.7" r="0.5" fill="#aaa" opacity="0.21"/><circle cx="367.2" cy="581.8" r="0.7" fill="#8080c0" opacity="0.17"/><circle cx="997.8" cy="567.5" r="0.5" fill="#c04040" opacity="0.22"/><circle cx="117" cy="600.3" r="0.6" fill="#c04040" opacity="0.12"/><circle cx="653.1" cy="580.2" r="0.6" fill="#aaa" opacity="0.22"/><circle cx="694.4" cy="577.7" r="0.7" fill="#8080c0" opacity="0.09"/><circle cx="822.4" cy="581.2" r="0.5" fill="#8080c0" opacity="0.16"/><circle cx="683.9" cy="552.7" r="0.6" fill="#c04040" opacity="0.18"/><circle cx="24.5" cy="520.6" r="0.5" fill="#aaa" opacity="0.11"/><circle cx="829.5" cy="572.4" r="0.7" fill="#8080c0" opacity="0.14"/><circle cx="292" cy="523.2" r="0.7" fill="#c04040" opacity="0.12"/><circle cx="353.7" cy="594.9" r="0.5" fill="#aaa" opacity="0.12"/><circle cx="662.7" cy="598.4" r="0.5" fill="#8080c0" opacity="0.13"/><circle cx="232.7" cy="601.2" r="0.5" fill="#aaa" opacity="0.08"/><circle cx="572.9" cy="550.9" r="0.7" fill="#8080c0" opacity="0.15"/><circle cx="213.2" cy="561.3" r="0.5" fill="#8080c0" opacity="0.14"/><circle cx="74.9" cy="510.1" r="0.6" fill="#aaa" opacity="0.12"/><circle cx="244.5" cy="107.7" r="0.5" fill="#c04040" opacity="0.17"/><circle cx="56.1" cy="216.5" r="0.7" fill="#888" opacity="0.12"/><circle cx="255.3" cy="320.6" r="0.7" fill="#a06060" opacity="0.19"/><circle cx="269.7" cy="209.8" r="0.5" fill="#c04040" opacity="0.13"/><circle cx="83.7" cy="493.5" r="0.7" fill="#888" opacity="0.08"/><circle cx="445.7" cy="393.6" r="0.7" fill="#a06060" opacity="0.16"/><circle cx="123.4" cy="398.6" r="0.5" fill="#a06060" opacity="0.16"/><circle cx="27.9" cy="487.9" r="0.6" fill="#a06060" opacity="0.09"/><circle cx="408.7" cy="28" r="0.5" fill="#a06060" opacity="0.06"/><circle cx="319.5" cy="218.8" r="0.5" fill="#a06060" opacity="0.20"/><circle cx="263.7" cy="372.1" r="0.6" fill="#c04040" opacity="0.17"/><circle cx="313.4" cy="307.8" r="0.5" fill="#888" opacity="0.07"/><circle cx="59.1" cy="27.4" r="0.6" fill="#a06060" opacity="0.12"/><circle cx="33.5" cy="195.5" r="0.6" fill="#c04040" opacity="0.15"/><circle cx="438.7" cy="426.1" r="0.6" fill="#a06060" opacity="0.20"/><circle cx="426" cy="319" r="0.6" fill="#c04040" opacity="0.10"/><circle cx="384.2" cy="360.5" r="0.7" fill="#a06060" opacity="0.12"/><circle cx="400.1" cy="95.8" r="0.5" fill="#888" opacity="0.17"/><circle cx="123.2" cy="103.5" r="0.7" fill="#a06060" opacity="0.12"/><circle cx="200.2" cy="105.6" r="0.5" fill="#a06060" opacity="0.12"/><circle cx="286.1" cy="44.5" r="0.7" fill="#888" opacity="0.13"/><circle cx="209.1" cy="188" r="0.7" fill="#a06060" opacity="0.20"/><circle cx="407.6" cy="37.5" r="0.5" fill="#888" opacity="0.10"/><circle cx="277.9" cy="299" r="0.7" fill="#c04040" opacity="0.12"/><circle cx="300.6" cy="113" r="0.5" fill="#888" opacity="0.14"/><circle cx="157.2" cy="355.8" r="0.5" fill="#a06060" opacity="0.18"/><circle cx="352.5" cy="129.7" r="0.7" fill="#a06060" opacity="0.11"/><circle cx="137.9" cy="477.9" r="0.7" fill="#c04040" opacity="0.19"/><circle cx="229.1" cy="25.8" r="0.5" fill="#a06060" opacity="0.18"/><circle cx="30.6" cy="488.9" r="0.7" fill="#888" opacity="0.17"/><circle cx="167.8" cy="239.1" r="0.6" fill="#888" opacity="0.16"/><circle cx="187.5" cy="78.6" r="0.5" fill="#888" opacity="0.08"/><circle cx="149.4" cy="363.3" r="0.5" fill="#888" opacity="0.10"/><circle cx="157.9" cy="476.6" r="0.6" fill="#888" opacity="0.08"/><circle cx="365" cy="247.2" r="0.6" fill="#a06060" opacity="0.10"/><circle cx="311" cy="49.1" r="0.5" fill="#888" opacity="0.12"/><circle cx="256.3" cy="219.8" r="0.5" fill="#a06060" opacity="0.19"/><circle cx="199" cy="25.9" r="0.5" fill="#888" opacity="0.10"/><circle cx="77.4" cy="181.7" r="0.5" fill="#a06060" opacity="0.11"/><circle cx="67.4" cy="289.2" r="0.7" fill="#a06060" opacity="0.06"/></g>
<g filter="url(#b30)"><ellipse cx="1040" cy="320" rx="40" ry="60" fill="#05061c" opacity=".7"/></g>
<path d="M0 0H39.500L0 39.500Z" fill="#1685e2"/>
<text x="4.500" y="16" font-family="Liberation Sans, sans-serif" font-weight="bold" font-size="11.500" fill="#fff" letter-spacing="-.3">4K</text>
<rect x="1031" y="9.500" width="31.500" height="31.500" rx="4.500" fill="none" stroke="#8c8c8c" stroke-width="1.800"/>
<rect x="1025" y="3" width="14" height="14" fill="#000"/>
<path d="M1031 2.500 L1032.800 8.700 L1039 10.500 L1032.800 12.300 L1031 18.500 L1029.200 12.300 L1023 10.500 L1029.200 8.700Z" fill="#fff"/>
<text x="1047.500" y="30.500" font-family="Liberation Sans, sans-serif" font-weight="bold" font-size="13.500" fill="#d4d4d4" text-anchor="middle">Ai</text>
</svg>
</div>
<!-- action bar -->
<div id="actions" class="abs"></div>
<svg class="abs" style="left:795px;top:726px" width="16" height="14" viewBox="0 0 16 14"><rect x="1.500" y="2" width="12.500" height="9.500" rx="2" fill="none" stroke="#3b3b3b" stroke-width="1.100"/><rect x="4" y="4.600" width="7.500" height="4.600" fill="none" stroke="#3b3b3b" stroke-width=".9"/><path d="M6.500 4.600v4.600M9 4.600v4.600" stroke="#3b3b3b" stroke-width=".8"/></svg>
<div class="t act" style="left:815px;letter-spacing:-.45px">Set</div>
<svg class="abs" style="left:847px;top:726px" width="14" height="14" viewBox="0 0 14 14"><path d="M2.500 1.500h7.700l2.300 2.300v7.200a1.500 1.500 0 0 1-1.500 1.500h-8.500a1.500 1.500 0 0 1-1.500-1.500v-8a1.500 1.500 0 0 1 1.500-1.500z" fill="none" stroke="#3b3b3b" stroke-width="1.100"/><path d="M4 1.500v3.300h5V1.500M3.500 12.500V8.300h7v4.200" fill="none" stroke="#3b3b3b" stroke-width="1.100"/></svg>
<div class="t act" style="left:866.500px;letter-spacing:-.6px">Save</div>
<svg class="abs" style="left:904px;top:726px" width="15" height="14" viewBox="0 0 15 14"><path d="M7.500 12.600 2.200 7.300a3.200 3.200 0 0 1 4.500-4.600l.8.800.8-.8a3.200 3.200 0 0 1 4.500 4.600z" fill="none" stroke="#3b3b3b" stroke-width="1.100" stroke-linejoin="round"/></svg>
<div class="t act" style="left:924.500px;letter-spacing:-.3px">Like</div>
<svg class="abs" style="left:960px;top:726px" width="14" height="14" viewBox="0 0 14 14"><path d="M5.500 2.500H3a1.500 1.500 0 0 0-1.500 1.500v7A1.500 1.500 0 0 0 3 12.500h7a1.500 1.500 0 0 0 1.500-1.500V9.500" fill="none" stroke="#3b3b3b" stroke-width="1.100" stroke-linecap="round"/><path d="M8.300 1.300 12.700 5 8.300 8.700V6.500C6 6.500 4.800 7.300 4 9c0-3.200 1.500-5.300 4.300-5.500z" fill="none" stroke="#3b3b3b" stroke-width="1.100" stroke-linejoin="round"/></svg>
<div class="t act" style="left:979px;letter-spacing:-.44px">Share</div>
<svg class="abs" style="left:1021px;top:725px" width="15" height="15" viewBox="0 0 15 15"><path d="M7.500 1.300 9.400 5.300l4.300.6-3.100 3 .8 4.300-3.900-2.100-3.900 2.100.8-4.300-3.100-3 4.300-.6z" fill="none" stroke="#3b3b3b" stroke-width="1.100" stroke-linejoin="round"/></svg>
<div class="t act" style="left:1040.500px;letter-spacing:.06px">Add to favorites</div>
<svg class="abs" style="left:1128px;top:731px" width="14" height="4" viewBox="0 0 14 4"><circle cx="2" cy="2" r="1.300" fill="#222"/><circle cx="7" cy="2" r="1.300" fill="#222"/><circle cx="12" cy="2" r="1.300" fill="#222"/></svg>

<!-- comments -->
<div id="comments" class="abs"></div>
<div class="t" style="left:103px;top:778px;font-size:12.200px;color:#1c1c1c;letter-spacing:.2px;-webkit-text-stroke:.45px #1c1c1c">Comments</div>
<svg class="abs" style="left:1132.500px;top:780.500px" width="8" height="5" viewBox="0 0 9 6"><path d="M1 1.200 4.500 4.600 8 1.200" fill="none" stroke="#555" stroke-width="1.200" stroke-linecap="round" stroke-linejoin="round"/></svg>

<!-- publisher -->
<div id="pubhead" class="abs"></div>
<div class="t" style="left:1180.500px;top:121.500px;font-size:12.200px;color:#1c1c1c;letter-spacing:.2px;-webkit-text-stroke:.45px #1c1c1c">Publisher</div>
<div id="pubbody" class="abs"></div>
<div class="t c" style="left:1320px;top:267.500px;font-size:20px;color:#1a1a1a;letter-spacing:-.4px">Beveer</div>
<div class="t c" style="left:1320.500px;top:296.500px;font-size:10.600px;color:#333;letter-spacing:-.05px">Gender: Private · Age: Private · Country: Private</div>
<div class="abs btn" style="left:1180px">Follow</div>
<div class="abs btn" style="left:1324px">More</div>
<div class="t c statn" style="left:1242px">201</div>
<div class="t c statl" style="left:1242px">Uploads</div>
<div class="abs vdiv" style="left:1280px"></div>
<div class="t c statn" style="left:1319.500px">30983</div>
<div class="t c statl" style="left:1319.500px">Likes</div>
<div class="abs vdiv" style="left:1358px"></div>
<div class="t c statn" style="left:1398px">141</div>
<div class="t c statl" style="left:1398px">Followers</div>
<!-- publisher avatar -->
<svg class="abs" style="left:1273px;top:161px" width="94" height="94" viewBox="0 0 94 94">
  <defs>
    <clipPath id="avc"><circle cx="47" cy="47" r="46.800"/></clipPath>
    <linearGradient id="avg" x1="0" y1="0" x2="0" y2="1"><stop offset="0" stop-color="#36578f"/><stop offset=".28" stop-color="#5f74a0"/><stop offset=".42" stop-color="#c98d6a"/><stop offset=".5" stop-color="#e5a55f"/><stop offset=".58" stop-color="#5a5f8a"/><stop offset=".8" stop-color="#3b4576"/><stop offset="1" stop-color="#232a4e"/></linearGradient>
    <filter id="avb" x="-30%" y="-30%" width="160%" height="160%"><feGaussianBlur stdDeviation="1.600"/></filter>
  </defs>
  <g clip-path="url(#avc)">
    <rect width="94" height="94" fill="url(#avg)"/>
    <g filter="url(#avb)">
      <path d="M0 14 L30 4 L60 10 L94 2 V0 H0Z" fill="#27457c" opacity=".8"/>
      <path d="M0 36 L20 32 L40 38 L0 44Z" fill="#d98f60" opacity=".7"/><path d="M70 36 L94 30 V44 L72 46Z" fill="#e8a868" opacity=".8"/>
      <path d="M26 14 L44 24 L58 38 L62 28 L66 40 L70 34 L72 58 L74 94 H40 L42 70 L30 64 L40 56 L28 50 L36 44 L26 30Z" fill="#3a2438"/>
      <path d="M44 24 L58 40 L50 52 L40 44Z" fill="#54304a"/>
      <path d="M42 62 L50 59 L54 67 L48 73 L42 70Z" fill="#d8884a" opacity=".75"/>
      <path d="M0 74 L18 70 L40 76 L44 94 H0Z" fill="#242a4a"/>
      <path d="M60 30 L64 22 L68 32Z" fill="#7a4a3a"/>
    </g>
  </g>
</svg>

<!-- ad -->
<div id="ad" class="abs">
<svg width="312" height="355" viewBox="0 0 312 355" style="display:block">
  <defs>
    <linearGradient id="adg" x1="0" y1="0" x2="0" y2="1"><stop offset="0" stop-color="#230a6e"/><stop offset=".16" stop-color="#2e1078"/><stop offset=".3" stop-color="#5a2486"/><stop offset=".4" stop-color="#60287a"/><stop offset=".5" stop-color="#45244f"/><stop offset=".6" stop-color="#322a38"/><stop offset=".68" stop-color="#2c2a30"/><stop offset="1" stop-color="#29282b"/></linearGradient>
    <linearGradient id="adw" x1="0" y1="0" x2="1" y2="0"><stop offset="0" stop-color="#c9a8e0" stop-opacity=".75"/><stop offset=".5" stop-color="#a77cc8" stop-opacity=".55"/><stop offset="1" stop-color="#7a4aa8" stop-opacity=".35"/></linearGradient>
    <radialGradient id="orb" cx=".5" cy=".4" r=".6"><stop offset="0" stop-color="#ffd0a0"/><stop offset=".35" stop-color="#f0607a"/><stop offset=".7" stop-color="#9038c8"/><stop offset="1" stop-color="#3a1a90"/></radialGradient>
    <filter id="adb" x="-20%" y="-20%" width="140%" height="140%"><feGaussianBlur stdDeviation="5"/></filter>
    <filter id="adb2" x="-20%" y="-20%" width="140%" height="140%"><feGaussianBlur stdDeviation="2.200"/></filter>
    <filter id="adb3" x="-20%" y="-20%" width="140%" height="140%"><feGaussianBlur stdDeviation="1.300"/></filter>
    <clipPath id="t1"><rect x="14" y="133" width="137" height="76" rx="7"/></clipPath>
    <clipPath id="t2"><rect x="162" y="133" width="137" height="76" rx="7"/></clipPath>
    <clipPath id="t3"><rect x="14" y="218" width="137" height="76" rx="7"/></clipPath>
    <clipPath id="t4"><rect x="162" y="218" width="137" height="76" rx="7"/></clipPath>
    <clipPath id="oc"><circle cx="155.500" cy="42.500" r="20"/></clipPath>
  </defs>
  <rect width="312" height="355" fill="url(#adg)"/>
  <g filter="url(#adb)">
    <path d="M0 2 C60 20 120 55 170 75 C220 92 270 98 312 92 V125 C250 130 190 120 130 95 C80 72 40 40 0 30Z" fill="url(#adw)"/>
    <path d="M0 60 C40 70 80 100 110 135 H0Z" fill="#8a3a9a" opacity=".7"/>
    <path d="M120 95 C170 120 250 128 312 122 V140 H150Z" fill="#8a4a98" opacity=".6"/>
    <path d="M150 0 H312 V70 C260 80 200 60 150 0Z" fill="#1f086a" opacity=".75"/>
  </g>
  <g fill="none" stroke="#d8c0f0" stroke-opacity=".35" stroke-width="1" filter="url(#adb3)">
    <path d="M0 6 C70 25 130 62 180 78 C230 92 275 92 312 86"/><path d="M0 12 C70 32 125 68 178 86 C228 100 275 100 312 95"/><path d="M0 20 C60 40 120 76 175 94 C225 108 275 108 312 104"/><path d="M0 70 C40 78 80 105 105 135"/>
  </g>
  <!-- orb -->
  <g clip-path="url(#oc)">
    <rect x="135" y="22" width="41" height="41" fill="url(#orb)"/>
    <path d="M135 30 Q145 20 156 26 T176 28 V22 H135Z" fill="#7a30c0" opacity=".8"/>
    <path d="M135 48 L143 40 L149 46 L156 38 L164 47 L170 42 L176 48 V52 H135Z" fill="#6a3a9a"/>
    <path d="M135 52 H176 V63 H135Z" fill="#2a7ad0"/><path d="M138 55 Q156 50 173 55 Q156 60 138 55Z" fill="#4ad0f0"/>
    <circle cx="156" cy="36" r="4" fill="#ffe8c8"/>
  </g>
  <circle cx="155.500" cy="42.500" r="19.500" fill="none" stroke="#c8a0f0" stroke-opacity=".5" stroke-width="1"/>
  <text x="156.500" y="86" font-family="Liberation Sans, sans-serif" font-weight="bold" font-size="18.500" fill="#fff" text-anchor="middle" textLength="140" lengthAdjust="spacingAndGlyphs">AI WALLPAPERS</text>
  <text x="156" y="107.500" font-family="Liberation Sans, sans-serif" font-size="15" fill="#f6eefb" text-anchor="middle" textLength="258" lengthAdjust="spacingAndGlyphs">Imagine your AI generated background</text>

  <!-- thumb 1 : anime faces -->
  <g clip-path="url(#t1)">
    <rect x="14" y="133" width="137" height="76" fill="#17131a"/>
    <g filter="url(#adb3)">
<path d="M16.7 133.0 L82.5 133.0 L82.5 154.3 L71.5 160.4 L55.1 152.8 L38.7 163.4 L20.9 155.8Z" fill="#245a98"/>
<path d="M55.1 133.0 L82.5 133.0 L82.5 152.0 L72.9 155.8 L66.1 142.1Z" fill="#3fa8d8"/>
<path d="M14.0 140.6 L34.5 136.8 L41.4 159.6 L25.0 171.0 L14.0 167.2Z" fill="#1a2c48"/>
<path d="M82.5 133.0 L151.0 133.0 L151.0 163.4 L134.6 155.8 L116.8 157.3 L96.2 154.3 L85.2 155.8Z" fill="#de4e1c"/>
<path d="M82.5 133.0 L98.9 133.0 L93.5 148.2 L85.2 155.8Z" fill="#f6b838"/>
<path d="M98.9 133.0 L130.4 133.0 L116.8 148.2 L104.4 149.7Z" fill="#f07028"/>
<path d="M130.4 140.6 L151.0 136.8 L151.0 174.8 L137.3 167.2Z" fill="#7a1c14"/>
<path d="M78.4 144.4 L89.4 144.4 L90.7 209.0 L77.0 209.0Z" fill="#256e74"/>
<path d="M35.9 161.9 L55.1 155.8 L74.3 163.4 L77.0 180.1 L68.8 192.3 L60.6 202.9 L44.1 201.4 L35.9 186.2Z" fill="#5c3a3a"/>
<path d="M55.1 174.8 L74.3 171.0 L75.7 182.4 L66.1 193.8 L57.8 190.0Z" fill="#8a5048"/>
<path d="M38.7 163.4 L55.1 157.3 L71.5 161.9 L68.8 168.0 L44.1 171.0Z" fill="#2a2430"/>
<path d="M89.4 155.8 L109.9 154.3 L131.8 163.4 L129.1 186.2 L115.4 199.9 L101.7 196.8 L93.5 183.2Z" fill="#b8482c"/>
<path d="M93.5 180.1 L109.9 177.1 L120.9 186.2 L112.6 198.4 L101.7 195.3Z" fill="#e8a080"/>
<path d="M88.0 155.8 L109.9 151.2 L115.4 160.4 L92.1 168.0Z" fill="#9098a0"/>
<path d="M98.9 166.4 L112.6 164.9 L112.6 171.0 L100.3 172.5Z" fill="#f05a20"/>
<path d="M14.0 178.6 L35.9 180.1 L46.9 202.9 L68.8 209.0 L14.0 209.0Z" fill="#0c0e14"/>
<path d="M96.2 199.9 L118.1 201.4 L131.8 186.2 L151.0 178.6 L151.0 209.0 L93.5 209.0Z" fill="#2a1014"/>
<path d="M46.9 201.4 L77.0 198.4 L77.0 209.0 L49.6 209.0Z" fill="#1c3a34"/>
    </g>
  </g>
  <!-- thumb 2 : portrait -->
  <g clip-path="url(#t2)">
    <rect x="162" y="133" width="137" height="76" fill="#4a5650"/>
    <g filter="url(#adb3)">
<path d="M162.0 133.0 L178.4 133.0 L175.7 209.0 L162.0 209.0Z" fill="#2c3a3a"/>
<path d="M178.4 139.1 L189.4 136.8 L189.4 174.8 L179.8 178.6Z" fill="#cfd4cc"/>
<path d="M274.3 133.0 L299.0 133.0 L299.0 209.0 L279.8 209.0Z" fill="#55584a"/>
<path d="M285.3 140.6 L299.0 140.6 L299.0 201.4 L288.0 201.4Z" fill="#3c463e"/>
<path d="M181.2 209.0 L183.9 171.0 L194.9 148.2 L211.3 137.6 L249.7 136.0 L268.9 148.2 L279.8 174.8 L282.6 209.0Z" fill="#9c4c1c"/>
<path d="M189.4 209.0 L192.1 174.8 L203.1 155.8 L211.3 171.0 L208.6 209.0Z" fill="#c4682a"/>
<path d="M257.9 155.8 L271.6 171.0 L277.1 209.0 L257.9 209.0Z" fill="#7a3410"/>
<path d="M189.4 133.0 L216.8 133.0 L211.3 143.6 L194.9 146.7Z" fill="#c8d4b8"/>
<path d="M246.9 133.0 L277.1 133.0 L274.3 148.2 L255.2 143.6Z" fill="#dfe6d4"/>
<path d="M216.8 133.0 L246.9 133.0 L244.2 139.1 L219.5 139.1Z" fill="#6a7a50"/>
<ellipse cx="232.6" cy="172.5" rx="22.6" ry="30.4" fill="#e8c6b0"/>
<ellipse cx="232.6" cy="206.0" rx="13.7" ry="10.6" fill="#d8aa92"/>
<ellipse cx="232.6" cy="155.8" rx="19.2" ry="10.6" fill="#eed2be"/>
<ellipse cx="220.9" cy="167.2" rx="4.1" ry="2.7" fill="#5a7078"/>
<ellipse cx="244.2" cy="167.2" rx="4.1" ry="2.7" fill="#5a7078"/>
<ellipse cx="232.6" cy="191.5" rx="5.5" ry="2.7" fill="#c46a66"/>
<path d="M208.6 155.8 L214.1 143.6 L230.5 140.6 L216.8 151.2 L212.7 171.0Z" fill="#a8541e"/>
<path d="M255.2 155.8 L249.7 143.6 L236.0 140.6 L249.7 152.8 L253.8 174.8Z" fill="#b45c22"/>
    </g>
  </g>
  <!-- thumb 3 : cherry tree -->
  <g clip-path="url(#t3)">
    <rect x="14" y="218" width="137" height="76" fill="#2c1230"/>
    <g filter="url(#adb2)">
<path d="M14.0 218.0 L68.8 218.0 L55.1 240.8 L27.7 252.2 L14.0 248.4Z" fill="#4a2a54"/>
<path d="M14.0 221.8 L30.4 218.0 L27.7 256.0 L14.0 263.6Z" fill="#341a3c"/>
<ellipse cx="109.9" cy="236.2" rx="41.1" ry="16.7" fill="#a42a68"/>
<ellipse cx="93.5" cy="233.2" rx="13.7" ry="9.1" fill="#e060a0"/>
<ellipse cx="130.4" cy="240.8" rx="19.2" ry="12.2" fill="#8a2460"/>
<ellipse cx="77.0" cy="240.8" rx="11.0" ry="7.6" fill="#c03878"/>
<ellipse cx="55.1" cy="256.0" rx="13.7" ry="15.2" fill="#e8682c"/>
<ellipse cx="56.5" cy="251.4" rx="6.2" ry="7.6" fill="#ffb458"/>
<ellipse cx="68.8" cy="263.6" rx="9.6" ry="6.8" fill="#c84a30"/>
<ellipse cx="68.8" cy="275.8" rx="46.6" ry="9.1" fill="#7a2a5c" opacity="0.85"/>
<ellipse cx="41.4" cy="269.7" rx="19.2" ry="6.1" fill="#9a3a50" opacity="0.8"/>
<ellipse cx="109.9" cy="271.2" rx="6.9" ry="4.6" fill="#f07838"/>
<path d="M115.4 294.0 L116.8 265.1 L107.2 251.4 L118.1 259.0 L123.6 245.4 L125.0 260.6 L137.3 249.9 L127.7 266.6 L129.1 294.0Z" fill="#24091e"/>
<path d="M14.0 283.4 L55.1 280.3 L96.2 286.4 L151.0 281.8 L151.0 294.0 L14.0 294.0Z" fill="#1e0a1c"/>
    </g>
  </g>
  <!-- thumb 4 : golden armor -->
  <g clip-path="url(#t4)">
    <rect x="162" y="218" width="137" height="76" fill="#2a2012"/>
    <g filter="url(#adb2)">
<path d="M227.8 225.6 L285.3 218.0 L293.5 221.0 L290.8 228.6 L233.2 240.8Z" fill="#f2c84c"/>
<path d="M244.2 240.8 L299.0 230.2 L299.0 271.2 L257.9 272.7Z" fill="#8a5a12"/>
<ellipse cx="268.9" cy="248.4" rx="8.2" ry="7.6" fill="#e8a830"/>
<ellipse cx="285.3" cy="256.0" rx="8.2" ry="9.1" fill="#d89428"/>
<ellipse cx="277.1" cy="240.8" rx="5.5" ry="4.6" fill="#f0c050"/>
<ellipse cx="257.9" cy="260.6" rx="5.5" ry="4.6" fill="#c88a20"/>
<path d="M162.0 240.8 L194.9 237.8 L200.4 286.4 L162.0 294.0Z" fill="#3c3016"/>
<ellipse cx="178.4" cy="265.1" rx="9.6" ry="10.6" fill="#c08420"/>
<ellipse cx="170.2" cy="251.4" rx="5.5" ry="4.6" fill="#a87a20"/>
<ellipse cx="189.4" cy="278.8" rx="6.9" ry="6.1" fill="#d89a28"/>
<path d="M186.7 294.0 L189.4 272.7 L203.1 262.1 L230.5 259.0 L252.4 265.1 L263.4 294.0Z" fill="#7a5c16"/>
<path d="M194.9 294.0 L197.6 274.2 L211.3 265.1 L219.5 266.6 L216.8 294.0Z" fill="#e0a628"/>
<path d="M230.5 265.1 L246.9 268.2 L255.2 294.0 L233.2 294.0Z" fill="#c48c1e"/>
<path d="M219.5 268.2 L230.5 266.6 L230.5 294.0 L219.5 294.0Z" fill="#2a1e0c"/>
<path d="M203.1 240.8 L205.8 227.1 L216.8 221.0 L227.8 224.1 L233.2 237.8 L230.5 259.0 L205.8 260.6Z" fill="#9c9478"/>
<path d="M207.2 228.6 L216.8 221.8 L226.4 225.6 L225.0 234.7 L208.6 236.2Z" fill="#dcd6bc"/>
<path d="M205.8 240.8 L230.5 239.3 L230.5 245.4 L222.3 246.9 L220.9 259.0 L215.4 259.0 L214.1 246.9 L205.8 246.9Z" fill="#17140e"/>
<path d="M222.3 240.8 L233.2 239.3 L233.2 256.0 L225.0 259.0Z" fill="#d8a028"/>
<path d="M162.0 286.4 L299.0 283.4 L299.0 294.0 L162.0 294.0Z" fill="#1c160a" opacity="0.8"/>
    </g>
  </g>
  <rect x="14" y="133" width="137" height="76" rx="7" fill="#000" opacity=".28"/>
  <rect x="162" y="133" width="137" height="76" rx="7" fill="#000" opacity=".12"/>
  <rect x="14" y="218" width="137" height="76" rx="7" fill="#000" opacity=".15"/>
  <rect x="162" y="218" width="137" height="76" rx="7" fill="#000" opacity=".15"/>
  <!-- button -->
  <rect x="103" y="311" width="107" height="28" rx="2" fill="#9a58b8"/>
  <text x="156" y="329" font-family="Liberation Sans, sans-serif" font-weight="bold" font-size="11" fill="#fff" text-anchor="middle" textLength="71" lengthAdjust="spacingAndGlyphs">Download now</text>
  <!-- watermark -->
  <g opacity=".82">
    <text x="128.500" y="346" font-family="Liberation Sans, sans-serif" font-weight="bold" font-size="34" fill="#d9d9d9" textLength="145" lengthAdjust="spacingAndGlyphs" stroke="#d9d9d9" stroke-width=".8">Pocket-lint</text>
    <circle cx="158.500" cy="337.500" r="6.300" fill="none" stroke="#cf2138" stroke-width="5"/>
  </g>
</svg>
</div>
<!-- share dialog -->
<div id="dialog" class="abs">
  <div id="dlghead" class="abs"></div>
  <svg class="abs" style="left:20px;top:11.500px" width="14" height="14" viewBox="0 0 14 14"><path d="M5.500 2.500H3.200A1.700 1.700 0 0 0 1.500 4.200v6.600a1.700 1.700 0 0 0 1.700 1.700h6.600a1.700 1.700 0 0 0 1.700-1.700V9.800" fill="none" stroke="#333" stroke-width="1.100" stroke-linecap="round"/><path d="M8.300 1.200 12.800 5 8.300 8.800V6.600C6 6.600 4.800 7.400 4 9.100c0-3.200 1.500-5.400 4.300-5.600z" fill="none" stroke="#333" stroke-width="1.100" stroke-linejoin="round"/></svg>
  <div class="t" style="left:45.500px;top:13.500px;font-size:10.800px;color:#2a2a2a;letter-spacing:-.12px">Share link</div>
  <div class="abs" style="left:347px;top:11px;width:16px;height:16px;border-radius:50%;background:#f7f7f7"></div>
  <svg class="abs" style="left:350px;top:13px" width="10" height="12" viewBox="0 0 10 12"><circle cx="5" cy="3.300" r="2.700" fill="#7b7b7b"/><path d="M.6 10.500V9a2.600 2.600 0 0 1 2.600-2.600h3.600A2.600 2.600 0 0 1 9.400 9v1.500z" fill="#8c8c8c"/></svg>
  <svg class="abs" style="left:388px;top:14px" width="10" height="10" viewBox="0 0 10 10"><path d="M.8.800l8.400 8.400M9.200.800.800 9.200" stroke="#3a3a3a" stroke-width="1" stroke-linecap="round"/></svg>

  <div class="abs" style="left:22px;top:51px;width:371px;height:36px;background:#f8f8f8;border:1px solid #ebebeb;border-radius:4px"></div>
  <div class="abs" style="left:23.500px;top:52.500px;width:33px;height:33px;background:#f6f6f6;border:1px solid #dcdcdc;border-radius:3px"></div>
  <svg class="abs" style="left:31px;top:63px" width="18" height="12" viewBox="0 0 18 12"><path d="M7.200 2.200H5.300a3.800 3.800 0 0 0 0 7.600h1.900M10.800 2.200h1.900a3.800 3.800 0 0 1 0 7.600h-1.900M5.600 6h6.800" fill="none" stroke="#2d2d2d" stroke-width="1.500" stroke-linecap="round"/></svg>
  <div class="t" style="left:63.500px;top:57.500px;font-size:9.600px;font-weight:bold;color:#222;letter-spacing:-.47px">backiee.com</div>
  <div class="t" style="left:63.500px;top:71.500px;font-size:10px;color:#5d5d5d;letter-spacing:-.23px">https://backiee.com/wallpaper/fantasy/277480</div>
  <div class="abs" style="left:331px;top:59px;width:21px;height:21px;background:#fbfbfb;border:1px solid #eeeeee;border-bottom-color:#e2e2e2;border-radius:3px"></div>
  <svg class="abs" style="left:336px;top:64px" width="12" height="12" viewBox="0 0 12 12"><g fill="none" stroke="#2a2a2a" stroke-width="1.550"><rect x="1" y="1" width="3.400" height="3.400" rx=".8"/><rect x="7.200" y="1" width="3.400" height="3.400" rx=".8"/><rect x="1" y="7.200" width="3.400" height="3.400" rx=".8"/><path d="M7 7l4 4M11 7l-4 4"/></g></svg>
  <div class="abs" style="left:362.500px;top:59px;width:21px;height:21px;background:#fbfbfb;border:1px solid #eeeeee;border-bottom-color:#e2e2e2;border-radius:3px"></div>
  <svg class="abs" style="left:366.500px;top:65px" width="13" height="9" viewBox="0 0 13 9"><path d="M5.200 1.500H4a3 3 0 0 0 0 6h1.200M7.800 1.500H9a3 3 0 0 1 0 6H7.800M4.200 4.500h4.600" fill="none" stroke="#333" stroke-width="1.050" stroke-linecap="round"/></svg>

  <!-- contacts -->
  <svg class="abs" style="left:47px;top:127px" width="16" height="28" viewBox="0 0 16 28">
    <defs><linearGradient id="ph" x1="0" y1="0" x2="1" y2="1"><stop offset="0" stop-color="#2bb3d6"/><stop offset="1" stop-color="#1385b8"/></linearGradient></defs>
    <rect x=".5" y=".5" width="15" height="27" rx="1.800" fill="#14708f"/><rect x="1.800" y="1.500" width="12.700" height="25" rx="1.200" fill="url(#ph)"/>
  </svg>
  <div class="t c dl" style="left:54.500px;top:160px">My Phone</div>

  <div class="abs av" style="left:111.500px;top:117.500px"><span>SW</span></div>
  <div class="abs av" style="left:186.500px;top:117.500px"><span>EN</span></div>
  <div class="abs av" style="left:261.500px;top:117.500px"><span>KF</span></div>
  <div class="abs av" style="left:336.500px;top:117.500px"><span>AW</span></div>
  <svg class="abs" style="left:138px;top:139px" width="15" height="14" viewBox="0 0 15 14"><rect x="4" y="1" width="10.500" height="12" rx="1.200" fill="#1e8de0"/><rect x="9" y="1" width="5.500" height="6" fill="#44b4f2"/><rect x="4" y="7" width="5" height="6" fill="#1566b8"/><rect x=".5" y="3.500" width="7.500" height="7.500" rx="1" fill="#0f63b5"/><circle cx="4.200" cy="7.200" r="2" fill="none" stroke="#fff" stroke-width="1.100"/></svg>
  <svg class="abs" style="left:213px;top:139px" width="15" height="14" viewBox="0 0 15 14"><rect x="4" y="1" width="10.500" height="12" rx="1.200" fill="#1e8de0"/><rect x="9" y="1" width="5.500" height="6" fill="#44b4f2"/><rect x="4" y="7" width="5" height="6" fill="#1566b8"/><rect x=".5" y="3.500" width="7.500" height="7.500" rx="1" fill="#0f63b5"/><circle cx="4.200" cy="7.200" r="2" fill="none" stroke="#fff" stroke-width="1.100"/></svg>
  <svg class="abs" style="left:288px;top:139px" width="15" height="14" viewBox="0 0 15 14"><rect x="4" y="1" width="10.500" height="12" rx="1.200" fill="#1e8de0"/><rect x="9" y="1" width="5.500" height="6" fill="#44b4f2"/><rect x="4" y="7" width="5" height="6" fill="#1566b8"/><rect x=".5" y="3.500" width="7.500" height="7.500" rx="1" fill="#0f63b5"/><circle cx="4.200" cy="7.200" r="2" fill="none" stroke="#fff" stroke-width="1.100"/></svg>
  <svg class="abs" style="left:363px;top:139px" width="15" height="14" viewBox="0 0 15 14"><rect x="4" y="1" width="10.500" height="12" rx="1.200" fill="#1e8de0"/><rect x="9" y="1" width="5.500" height="6" fill="#44b4f2"/><rect x="4" y="7" width="5" height="6" fill="#1566b8"/><rect x=".5" y="3.500" width="7.500" height="7.500" rx="1" fill="#0f63b5"/><circle cx="4.200" cy="7.200" r="2" fill="none" stroke="#fff" stroke-width="1.100"/></svg>
  <div class="t c dl" style="left:129.500px;top:160px">saeed wazir</div>
  <div class="t c dl" style="left:129.500px;top:172.500px">(You)</div>
  <div class="t c dl" style="left:204.500px;top:160px">Eric Nielsen</div>
  <div class="t c dl" style="left:279.500px;top:160px">Kurt Farao (via</div>
  <div class="t c dl" style="left:279.500px;top:172.500px">Google Docs)</div>
  <div class="t c dl" style="left:354.500px;top:160px">Atiyah Wazir</div>

  <div class="abs" style="left:17px;top:194.500px;width:375px;height:1px;background:#e4e4e4"></div>
  <div class="t" style="left:18px;top:208px;font-size:11px;color:#444;letter-spacing:-.12px">Share using</div>
  <div class="abs" style="left:328px;top:203px;width:64px;height:20px;background:#fbfbfb;border:1px solid #ededed;border-bottom-color:#e0e0e0;border-radius:3px"></div>
  <div class="t" style="left:333.500px;top:207.500px;font-size:11px;color:#2a2a2a;letter-spacing:-.17px">All apps</div>
  <svg class="abs" style="left:380px;top:209px" width="6" height="9" viewBox="0 0 6 9"><path d="M1.300 1.200 4.600 4.500 1.300 7.800" fill="none" stroke="#444" stroke-width="1" stroke-linecap="round" stroke-linejoin="round"/></svg>

  <!-- apps row 1 -->
  <svg class="abs" style="left:42px;top:242px" width="28" height="26" viewBox="0 0 28 26">
    <g fill="none" stroke="#1b1b1b" stroke-width="1.700" stroke-linecap="round" stroke-linejoin="round">
      <path d="M9.500 10H5.300A2.300 2.300 0 0 0 3 12.300v9.400A2.300 2.300 0 0 0 5.300 24h9.400a2.300 2.300 0 0 0 2.300-2.300V20"/>
      <path d="M14.500 8 21 13.500 14.500 19v-3.300C11 15.700 9 17 7.500 19.500c0-4.800 2.500-8 7-8.300z"/>
      <path d="M17 5.300a7.500 7.500 0 0 1 6.700 6.200"/><path d="M17.500 1.700a11 11 0 0 1 9.300 8.800"/>
    </g>
  </svg>
  <div class="t c dl" style="left:56px;top:274.500px">Nearby Sharing</div>
  <svg class="abs" style="left:118.500px;top:243px" width="25" height="25" viewBox="0 0 25 25">
    <defs><linearGradient id="fb" x1="0" y1="0" x2="0" y2="1"><stop offset="0" stop-color="#4a6cc0"/><stop offset="1" stop-color="#2d4c98"/></linearGradient></defs>
    <rect width="25" height="25" fill="url(#fb)"/>
    <path d="M17.500 25v-9.300h3l.5-3.700h-3.500V9.800c0-1.100.4-1.800 1.900-1.800H21V4.700C20.600 4.600 19.600 4.500 18.400 4.500c-2.800 0-4.600 1.700-4.600 4.700V12h-3v3.700h3V25z" fill="#fff"/>
  </svg>
  <div class="t c dl" style="left:131px;top:274.500px">Facebook</div>
  <svg class="abs" style="left:192.500px;top:244px" width="27" height="23" viewBox="0 0 27 23">
    <path d="M2 3h23v17.500H2z" fill="#f1f1f1"/><path d="M2 20.500 13.500 11 25 20.500z" fill="#e2e2e2"/>
    <path d="M1 4.800V20.500h4.600V10.500L13.500 16.500 21.400 10.500V20.500H26V4.800C26 2.500 23.500 1.300 21.700 2.700L13.500 9 5.300 2.700C3.500 1.300 1 2.500 1 4.800z" fill="#d5463c"/>
    <path d="M1 4.800V20.500h4.600V6.500z" fill="#c53a32"/><path d="M26 4.800V20.500h-4.600V6.500z" fill="#c53a32"/>
  </svg>
  <div class="t c dl" style="left:206px;top:274.500px">Gmail</div>
  <svg class="abs" style="left:267px;top:244px" width="27" height="24" viewBox="0 0 27 24">
    <rect x="8" y="1" width="18" height="21.500" rx="1.500" fill="#1490df"/>
    <rect x="17" y="1" width="9" height="7.200" fill="#28a8ea"/><rect x="8" y="1" width="9" height="7.200" fill="#0a62b0"/>
    <rect x="17" y="8.200" width="9" height="7.200" fill="#50d9ff" opacity=".55"/><rect x="8" y="8.200" width="9" height="7.200" fill="#0f78d4"/>
    <rect x="8" y="15.400" width="18" height="7.100" fill="#0f5fb0"/><path d="M26 12v10.500H12z" fill="#1f93e3"/>
    <rect x=".8" y="5.500" width="13" height="13" rx="1.500" fill="#0f68c0"/>
    <circle cx="7.300" cy="12" r="3.400" fill="none" stroke="#fff" stroke-width="1.700"/>
  </svg>
  <div class="t c dl" style="left:281px;top:274.500px">Outlook</div>
  <svg class="abs" style="left:343.500px;top:243px" width="25" height="25" viewBox="0 0 25 25">
    <rect width="25" height="25" rx="9.500" fill="#1a86f3"/>
    <path d="M17.300 7.200c-1.300-1-3.300-.4-3.600 1.600l-1.300 7.400c-.4 2-2.400 2.600-3.600 1.600M9.500 12.300h6.200" fill="none" stroke="#fff" stroke-width="2.200" stroke-linecap="round"/>
    <circle cx="17.500" cy="8" r="1.200" fill="#0d2c8a"/>
  </svg>
  <div class="t c dl" style="left:356px;top:274.500px">Samsung Flow</div>

  <!-- apps row 2 -->
  <svg class="abs" style="left:43px;top:319px" width="26" height="25" viewBox="0 0 26 25">
    <path d="M.5 8.500 13 1.200 25.500 8.500z" fill="#0d5fae"/>
    <rect x="2.500" y="8" width="21" height="10" fill="#fff"/>
    <path d="M.5 8.500v14.800h25V8.500L13 15.500z" fill="#2ba6e8"/>
    <path d="M.5 23.300 13 15.500l12.500 7.800z" fill="#1a8bd8"/>
    <path d="M2.500 8.600 13 14.500l10.500-5.900" fill="none" stroke="#e8f4fc" stroke-width="1.500"/>
  </svg>
  <div class="t c dl" style="left:56px;top:350.500px">Mail</div>
  <svg class="abs" style="left:118.500px;top:319.500px" width="25" height="25" viewBox="0 0 25 25">
    <rect width="25" height="25" fill="#2cc25b"/>
    <path d="M12.700 4.800a7.500 7.500 0 0 0-6.500 11.300L5 20.200l4.300-1.100a7.500 7.500 0 1 0 3.400-14.300z" fill="none" stroke="#fff" stroke-width="1.500"/>
    <path d="M9.800 8.800c.3-.3.900-.3 1.100.1l.7 1.500c.1.300 0 .6-.2.800l-.5.500c.5 1.100 1.400 2 2.500 2.500l.5-.5c.2-.2.500-.3.800-.2l1.500.7c.4.200.4.800.1 1.100-.7.800-1.800 1-2.800.6-2-.8-3.600-2.400-4.400-4.400-.3-1 0-2 .7-2.700z" fill="#fff"/>
  </svg>
  <div class="t c dl" style="left:131px;top:354px">WhatsApp</div>
  <div class="t c ins" style="left:127px;top:364px">Install</div>
  <svg class="abs" style="left:141px;top:364.500px" width="7" height="8" viewBox="0 0 7 8"><path d="M3.500.5v5.300M1.300 3.700 3.500 5.900 5.700 3.700M1 7.500h5" fill="none" stroke="#8a8a8a" stroke-width=".8"/></svg>
  <svg class="abs" style="left:193.500px;top:319.500px" width="25" height="25" viewBox="0 0 25 25">
    <rect width="25" height="25" fill="#2a9fdc"/>
    <path d="M4.800 12.200 19.500 6.400c.7-.3 1.300.2 1.100 1L18.100 18.800c-.2.800-.7 1-1.400.6l-3.600-2.700-1.800 1.700c-.4.400-.8.300-.9-.3l-.8-3.500-4.600-1.400c-.7-.2-.7-.7-.2-1z" fill="#fff"/>
    <path d="M9.600 14.600 17.500 9c.3-.2.500 0 .3.200L11.600 15l-.4 3.400z" fill="#b9dff3"/>
  </svg>
  <div class="t c dl" style="left:206px;top:354px">Unigram...</div>
  <div class="t c ins" style="left:202px;top:364px">Install</div>
  <svg class="abs" style="left:216px;top:364.500px" width="7" height="8" viewBox="0 0 7 8"><path d="M3.500.5v5.300M1.300 3.700 3.500 5.900 5.700 3.700M1 7.500h5" fill="none" stroke="#8a8a8a" stroke-width=".8"/></svg>
  <svg class="abs" style="left:269.500px;top:320.500px" width="23" height="23" viewBox="0 0 23 23">
    <rect width="23" height="23" rx="9" fill="#2e6fe0"/>
    <g fill="none" stroke="#fff" stroke-width="1.800" stroke-linecap="round"><path d="M5.800 10a6 6 0 0 1 11-1.500"/><path d="M17.200 13a6 6 0 0 1-11 1.500"/></g>
    <path d="M7.500 10.500h5l-2-1.700M15.500 12.500h-5l2 1.700" fill="none" stroke="#fff" stroke-width="1.300" stroke-linecap="round" stroke-linejoin="round"/>
  </svg>
  <div class="t c dl" style="left:281px;top:354px">Quick Share</div>
  <div class="t c ins" style="left:277px;top:364px">Install</div>
  <svg class="abs" style="left:291px;top:364.500px" width="7" height="8" viewBox="0 0 7 8"><path d="M3.500.5v5.300M1.300 3.700 3.500 5.900 5.700 3.700M1 7.500h5" fill="none" stroke="#8a8a8a" stroke-width=".8"/></svg>
  <svg class="abs" style="left:343.500px;top:319.500px" width="25" height="25" viewBox="0 0 25 25">
    <rect width="25" height="25" fill="#050505"/>
    <path d="M5 5h4.300l10.700 15h-4.300z" fill="none" stroke="#fff" stroke-width="1.300" stroke-linejoin="round"/>
    <path d="M19.500 5 13.300 11.800M11.400 13.800 5.500 20" stroke="#fff" stroke-width="1.300"/>
  </svg>
  <div class="t c dl" style="left:356px;top:350.500px">Twitter</div>
</div>
<!-- taskbar -->
<div class="abs" style="left:0;top:802px;width:1500px;height:4px;background:#f3fafc;border-top:1px solid #fbe6e6"></div>
<div id="taskbar" class="abs"></div>
<svg class="abs" style="left:378.500px;top:816px" width="19" height="19" viewBox="0 0 19 19">
  <defs><linearGradient id="wn" x1="0" y1="0" x2="1" y2="1"><stop offset="0" stop-color="#4cc2f5"/><stop offset="1" stop-color="#0a78d4"/></linearGradient></defs>
  <rect x="0" y="0" width="9" height="9" fill="url(#wn)"/><rect x="9.800" y="0" width="9" height="9" fill="url(#wn)"/><rect x="0" y="9.800" width="9" height="9" fill="url(#wn)"/><rect x="9.800" y="9.800" width="9" height="9" fill="url(#wn)"/>
</svg>
<div class="abs" style="left:408px;top:814px;width:169px;height:23px;border-radius:12px;background:#edf7fb;box-shadow:0 0 0 1px rgba(186,214,226,.6)"></div>
<div class="abs" style="left:536px;top:815.500px;width:40px;height:20px;border-radius:10px;background:#e2e6e8"></div>
<svg class="abs" style="left:415px;top:819px" width="13" height="13" viewBox="0 0 13 13"><circle cx="5.600" cy="5.600" r="4.100" fill="none" stroke="#3a3a3a" stroke-width="1.500"/><path d="M8.700 8.700 12 12" stroke="#3a3a3a" stroke-width="1.600" stroke-linecap="round"/></svg>
<div class="t" style="left:436px;top:819.500px;font-size:10.600px;color:#6b6b6b;letter-spacing:-.33px">Search</div>
<svg class="abs" style="left:546.500px;top:817px" width="19" height="16" viewBox="0 0 19 16">
  <path d="M6.500 3.500V2a1.200 1.200 0 0 1 1.200-1.200h3.600A1.200 1.200 0 0 1 12.500 2v1.500" fill="none" stroke="#7a4a10" stroke-width="1.500"/>
  <rect x=".5" y="3.500" width="18" height="12" rx="1.500" fill="#c4700f"/><rect x=".5" y="3.500" width="18" height="5.500" rx="1.500" fill="#e4921c"/>
  <path d="M8 8.500h3v2l-1.500 1.500L8 10.500z" fill="#ffd76a"/>
</svg>
<!-- task view -->
<svg class="abs" style="left:587px;top:816px" width="20" height="19" viewBox="0 0 20 19"><rect x="6" y="1" width="13" height="12" rx="1.500" fill="#f3eef2"/><rect x="8.500" y="6" width="7" height="7" fill="#cdb9c8"/><rect x="1" y="6" width="14" height="12" rx="1.500" fill="#25262b"/><rect x="8.500" y="6" width="6.500" height="6.500" fill="#c9b6c3"/></svg>
<!-- edge -->
<svg class="abs" style="left:622px;top:816px" width="19" height="19" viewBox="0 0 19 19">
  <defs><linearGradient id="ed" x1="0" y1="0" x2="1" y2="0"><stop offset="0" stop-color="#1b7fd0"/><stop offset="1" stop-color="#3ecf6a"/></linearGradient></defs>
  <circle cx="9.500" cy="9.500" r="9.300" fill="#1670c4"/><path d="M.5 8A9.300 9.300 0 0 1 18.800 9c0 2.500-2 4-4 4-2.300 0-3-1.300-2.500-2.300.6-1.200-1-3.700-4-3.700C5 7 2 8.500.5 11z" fill="url(#ed)"/>
  <path d="M7 9.500c0 4 3 6.800 7.500 6.300-2 2-9 2.500-9.800-4.300C5 9.500 6 8.500 7 9.500z" fill="#0f5aa8"/><path d="M7.500 9.500a3.300 3.300 0 0 0 5 3c-.8-1 .5-1.500 0-3z" fill="#d9eefb"/>
</svg>
<!-- copilot -->
<svg class="abs" style="left:657px;top:816px" width="20" height="19" viewBox="0 0 20 19">
  <defs><linearGradient id="cp1" x1="0" y1="0" x2="0" y2="1"><stop offset="0" stop-color="#2a7be4"/><stop offset=".55" stop-color="#38b8d8"/><stop offset="1" stop-color="#e8c03c"/></linearGradient><linearGradient id="cp2" x1="0" y1="0" x2="0" y2="1"><stop offset="0" stop-color="#7a5ce8"/><stop offset=".5" stop-color="#e0479a"/><stop offset="1" stop-color="#f08a3c"/></linearGradient></defs>
  <path d="M5.500 2.500C6 1.500 7 1 8 1h4.500c1.300 0 2.300.8 2.700 2l.8 2.500H12c-1.200 0-2 .7-2.400 1.800L7.500 14c-.4 1.200-1.300 2-2.500 2H3.500C1.500 16 .3 14.200 1 12.200z" fill="url(#cp1)"/>
  <path d="M14.500 16.500c-.5 1-1.500 1.500-2.500 1.500H7.500c-1.300 0-2.300-.8-2.700-2L4 13.500h4c1.200 0 2-.7 2.400-1.800L12.500 5c.4-1.200 1.300-2 2.500-2h1.500c2 0 3.200 1.800 2.500 3.800z" fill="url(#cp2)"/>
  <path d="M9.600 7.300 12 5.300 10.400 11.700 8 13.700z" fill="#fff" opacity=".55"/>
</svg>
<!-- explorer -->
<svg class="abs" style="left:691px;top:816px" width="20" height="18" viewBox="0 0 20 18">
  <path d="M1 2.500A1.500 1.500 0 0 1 2.500 1h4.800l1.800 2h8.400A1.500 1.500 0 0 1 19 4.500V6H1z" fill="#e6a417"/>
  <rect x="1" y="4.500" width="18" height="12.500" rx="1.500" fill="#fbd14b"/><rect x="1" y="4.500" width="18" height="4" fill="#ffe07a"/>
  <path d="M4.500 17v-4.500A1.500 1.500 0 0 1 6 11h8a1.500 1.500 0 0 1 1.500 1.500V17z" fill="#2a7bd0"/>
</svg>
<div class="abs" style="left:698.500px;top:838px;width:4px;height:2px;border-radius:1px;background:#6b7f8a"></div>
<!-- store -->
<svg class="abs" style="left:725.500px;top:816px" width="19" height="19" viewBox="0 0 19 19">
  <path d="M5.500 5V3.500a2 2 0 0 1 2-2h4a2 2 0 0 1 2 2V5" fill="none" stroke="#2fa0e0" stroke-width="1.600"/>
  <rect x=".8" y="4.500" width="17.400" height="14" rx="2.200" fill="#144a9c"/>
  <rect x="6" y="8" width="3" height="3" fill="#f25022"/><rect x="10" y="8" width="3" height="3" fill="#7fba00"/><rect x="6" y="12" width="3" height="3" fill="#00a4ef"/><rect x="10" y="12" width="3" height="3" fill="#ffb900"/>
</svg>
<!-- P S T -->
<svg class="abs" style="left:759.500px;top:816px" width="20" height="19" viewBox="0 0 20 19"><rect x="1" y="1" width="15" height="17" rx="3" fill="#7cc03c"/><path d="M1 7 9 1.500l3.500 1L3 9.500z" fill="#3a78c8"/><rect x="9" y="5" width="10" height="10" rx="1.500" fill="#cfe6a8"/><text x="14" y="13.500" font-family="Liberation Sans, sans-serif" font-size="9" font-weight="bold" fill="#fff" text-anchor="middle">P</text></svg>
<svg class="abs" style="left:794px;top:816px" width="20" height="19" viewBox="0 0 20 19"><rect x="1" y="1" width="15" height="17" rx="3" fill="#f4a044"/><path d="M1 7 9 1.500l3.500 1L3 9.500z" fill="#3a78c8"/><rect x="9" y="5" width="10" height="10" rx="1.500" fill="#fbd9a8"/><text x="14" y="13.500" font-family="Liberation Sans, sans-serif" font-size="9" font-weight="bold" fill="#fff" text-anchor="middle">S</text></svg>
<svg class="abs" style="left:828.500px;top:816px" width="20" height="19" viewBox="0 0 20 19"><rect x="1" y="1" width="15" height="17" rx="3" fill="#e0323c"/><path d="M1 7 9 1.500l3.500 1L3 9.500z" fill="#5a68c8"/><rect x="9" y="5" width="10" height="10" rx="1.500" fill="#f7c4c4"/><text x="14" y="13.500" font-family="Liberation Sans, sans-serif" font-size="9" font-weight="bold" fill="#fff" text-anchor="middle">T</text></svg>
<!-- settings gear -->
<svg class="abs" style="left:863px;top:815.500px" width="19" height="19" viewBox="0 0 19 19">
  <circle cx="9.500" cy="9.500" r="6.300" fill="none" stroke="#6f7884" stroke-width="3.400"/>
  <circle cx="9.500" cy="9.500" r="8" fill="none" stroke="#6f7884" stroke-width="2.600" stroke-dasharray="4.200 4.180" stroke-dashoffset="2"/>
  <circle cx="9.500" cy="9.500" r="3.400" fill="#1f64c0"/><circle cx="9.500" cy="9.500" r="1.500" fill="#0e3f8a"/>
</svg>
<!-- chrome -->
<svg class="abs" style="left:897.500px;top:815.500px" width="19" height="19" viewBox="0 0 19 19">
  <circle cx="9.500" cy="9.500" r="9.200" fill="#3aa757"/><path d="M9.500 9.500 1.500 5A9.200 9.200 0 0 1 17.500 5z" fill="#e04434"/><path d="M9.500 9.500 17.500 5a9.200 9.200 0 0 1-8 13.700z" fill="#f6c02d"/>
  <circle cx="9.500" cy="9.500" r="4.200" fill="#fff"/><circle cx="9.500" cy="9.500" r="3.300" fill="#3b82f0"/><circle cx="14.500" cy="4" r="3.200" fill="#b5503c"/>
</svg>
<!-- word -->
<svg class="abs" style="left:931.500px;top:816px" width="20" height="18" viewBox="0 0 20 18">
  <rect x="5" y=".5" width="14.500" height="17" rx="1.500" fill="#1e5fc4"/><rect x="5" y=".5" width="14.500" height="4.300" fill="#3d8ae8"/><rect x="5" y="4.800" width="14.500" height="4.300" fill="#2a73d4"/><rect x="5" y="13.200" width="14.500" height="4.300" fill="#123f92"/>
  <rect x=".5" y="4" width="10" height="10" rx="1.200" fill="#1a52b0"/>
  <text x="5.500" y="12" font-family="Liberation Sans, sans-serif" font-size="8.500" font-weight="bold" fill="#fff" text-anchor="middle">W</text>
</svg>
<!-- chrome 2 -->
<svg class="abs" style="left:966.500px;top:815.500px" width="19" height="19" viewBox="0 0 19 19">
  <circle cx="9.500" cy="9.500" r="9.200" fill="#3aa757"/><path d="M9.500 9.500 1.500 5A9.200 9.200 0 0 1 17.500 5z" fill="#e04434"/><path d="M9.500 9.500 17.500 5a9.200 9.200 0 0 1-8 13.700z" fill="#f6c02d"/>
  <circle cx="9.500" cy="9.500" r="4.200" fill="#fff"/><circle cx="9.500" cy="9.500" r="3.300" fill="#3b82f0"/><circle cx="14.500" cy="4" r="3.200" fill="#a64ec0"/>
</svg>
<!-- excel -->
<svg class="abs" style="left:1000px;top:816px" width="20" height="18" viewBox="0 0 20 18">
  <rect x="5" y=".5" width="14.500" height="17" rx="1.500" fill="#1a8a4c"/><rect x="5" y=".5" width="7.200" height="8.500" fill="#1f9a58"/><rect x="12.200" y=".5" width="7.300" height="8.500" fill="#2fb870"/><rect x="5" y="9" width="14.500" height="8.500" fill="#12693a"/>
  <rect x=".5" y="4" width="10" height="10" rx="1.200" fill="#0f6e3a"/>
  <text x="5.500" y="12" font-family="Liberation Sans, sans-serif" font-size="8.500" font-weight="bold" fill="#fff" text-anchor="middle">X</text>
</svg>
<!-- blue app -->
<svg class="abs" style="left:1034.500px;top:817px" width="20" height="16" viewBox="0 0 20 16">
  <rect x=".5" y=".5" width="19" height="15" rx="1" fill="#1878d0"/><path d="M.5 8c3 2.500 5-2 8 1s5-2.500 7.500 0 3 1 3.500.5V15.500H.5z" fill="#79c4f0"/><path d="M.5 12c4-1 6 1 10 0s6 0 9-.5V15.500H.5z" fill="#c8e8fa"/>
</svg>
<!-- calculator -->
<svg class="abs" style="left:1071px;top:815.500px" width="16" height="19" viewBox="0 0 16 19">
  <rect x=".5" y=".5" width="15" height="18" rx="1.500" fill="#5a6b7c"/><rect x="2" y="2" width="12" height="4" fill="#8fd0e0"/>
  <g fill="#e8eef2"><rect x="2" y="7.500" width="3.300" height="3"/><rect x="6.300" y="7.500" width="3.300" height="3"/><rect x="10.700" y="7.500" width="3.300" height="3"/><rect x="2" y="11.500" width="3.300" height="3"/><rect x="6.300" y="11.500" width="3.300" height="3"/><rect x="2" y="15.300" width="3.300" height="2.200"/><rect x="6.300" y="15.300" width="3.300" height="2.200"/></g><rect x="10.700" y="11.500" width="3.300" height="6" fill="#3a86d8"/>
</svg>
<!-- backiee -->
<svg class="abs" style="left:1104px;top:815.500px" width="19" height="19" viewBox="0 0 19 19">
  <defs><linearGradient id="bk" x1="0" y1="0" x2="1" y2="1"><stop offset="0" stop-color="#f0532f"/><stop offset=".5" stop-color="#d8362a"/><stop offset="1" stop-color="#1f9a8a"/></linearGradient></defs>
  <rect x=".3" y=".3" width="18.400" height="18.400" rx="5.500" fill="url(#bk)"/>
  <path d="M2 7Q6 2 10 7T18 13V6Q13 1 8 1.500 3 1 2 5z" fill="#f7a83a" opacity=".85"/><path d="M1 12Q6 8 10 13T17 18H6Q1 18 1 14z" fill="#1d3a52" opacity=".75"/><path d="M8 2Q13 6 12 12T16 17" fill="none" stroke="#2cc0b0" stroke-width="1.500" opacity=".8"/>
</svg>
<!-- running indicators -->
<div class="abs" style="left:870.500px;top:838px;width:4px;height:2px;border-radius:1px;background:#74848e"></div>
<div class="abs" style="left:905px;top:838px;width:4px;height:2px;border-radius:1px;background:#74848e"></div>
<div class="abs" style="left:939.500px;top:838px;width:4px;height:2px;border-radius:1px;background:#74848e"></div>
<div class="abs" style="left:974px;top:838px;width:4px;height:2px;border-radius:1px;background:#74848e"></div>
<div class="abs" style="left:1008px;top:838px;width:4px;height:2px;border-radius:1px;background:#74848e"></div>
<div class="abs" style="left:1042.500px;top:838px;width:4px;height:2px;border-radius:1px;background:#74848e"></div>
<div class="abs" style="left:1077px;top:838px;width:4px;height:2px;border-radius:1px;background:#74848e"></div>
<div class="abs" style="left:1111px;top:838px;width:5px;height:2px;border-radius:1px;background:#5f7480"></div>
<!-- tray -->
<svg class="abs" style="left:1325px;top:821px" width="10" height="7" viewBox="0 0 10 7"><path d="M1.200 5.500 5 1.700 8.800 5.500" fill="none" stroke="#2a2a2a" stroke-width="1.200" stroke-linecap="round" stroke-linejoin="round"/></svg>
<div class="t c" style="left:1359px;top:814.500px;font-size:9px;color:#1f1f1f;letter-spacing:-.5px">ENG</div>
<div class="t c" style="left:1359px;top:827.800px;font-size:9px;color:#1f1f1f;letter-spacing:-.5px">US</div>
<svg class="abs" style="left:1382px;top:819px" width="14" height="11" viewBox="0 0 14 11"><g fill="none" stroke="#2a2a2a" stroke-width="1.100" stroke-linecap="round"><path d="M1 4a8.500 8.500 0 0 1 12 0"/><path d="M3 6.200a5.700 5.700 0 0 1 8 0"/><path d="M5 8.300a2.900 2.900 0 0 1 4 0"/></g><circle cx="7" cy="10" r=".9" fill="#2a2a2a"/></svg>
<svg class="abs" style="left:1400px;top:819px" width="13" height="12" viewBox="0 0 13 12"><path d="M1 4.300h2.200L6.200 1.500v9L3.200 7.700H1z" fill="none" stroke="#2a2a2a" stroke-width="1" stroke-linejoin="round"/><path d="M8.300 4a3 3 0 0 1 0 4" fill="none" stroke="#2a2a2a" stroke-width="1" stroke-linecap="round"/><path d="M10 2.500a5.300 5.300 0 0 1 0 7" fill="none" stroke="#9ab0ba" stroke-width="1" stroke-linecap="round"/></svg>
<svg class="abs" style="left:1419px;top:819px" width="16" height="12" viewBox="0 0 16 12"><rect x="1.500" y="4" width="12" height="6.500" rx="1.500" fill="#2a2a2a"/><rect x="14" y="6" width="1.500" height="2.500" rx=".6" fill="#2a2a2a"/><path d="M3 4V1.500M5.500 4V2.500M3 1.500h2.500" stroke="#2a2a2a" stroke-width="1.200" fill="none"/><path d="M7 2l3 2" stroke="#2a2a2a" stroke-width="1.200"/></svg>
<div class="t" style="right:15px;top:814px;font-size:9.600px;color:#1f1f1f;letter-spacing:-.15px">10:54 AM</div>
<div class="t" style="right:15px;top:827px;font-size:9.600px;color:#1f1f1f;letter-spacing:.05px">2/4/2025</div>
</body>
</html>
